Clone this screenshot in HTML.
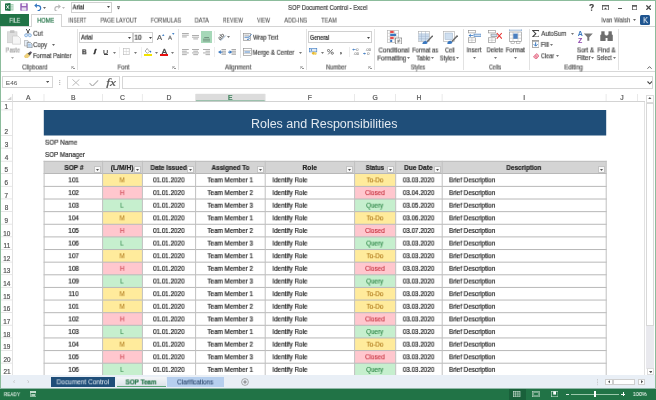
<!DOCTYPE html>
<html><head><meta charset="utf-8"><style>
*{margin:0;padding:0;box-sizing:border-box}
html,body{width:656px;height:400px;overflow:hidden;background:#fff;font-family:'Liberation Sans',sans-serif}
body{position:relative}
.a{position:absolute;white-space:nowrap}
.t{transform-origin:0 0;will-change:transform;-webkit-text-stroke:0.2px currentColor}
</style></head><body>
<div class="a" style="left:0px;top:0px;width:656px;height:1px;background:#8cbc9c"></div>
<div class="a" style="left:0px;top:0px;width:1px;height:400px;background:#8cbc9c"></div>
<div class="a" style="left:655px;top:0px;width:1px;height:400px;background:#8cbc9c"></div>
<svg class="a" style="left:5px;top:3px;" width="9" height="8" viewBox="0 0 9 8"><rect x="3.5" y="1" width="5" height="6.5" fill="#a8d0b4"/><path d="M5 2.6 H8.3 M5 4.2 H8.3 M5 5.8 H8.3" stroke="#e8f4ec" stroke-width="0.6"/><path d="M0 0.6 L5.5 0 L5.5 8 L0 7.4Z" fill="#1e7145"/><path d="M1.4 2.2 L4 5.8 M4 2.2 L1.4 5.8" stroke="#fff" stroke-width="0.9"/></svg>
<svg class="a" style="left:20px;top:3px;" width="8" height="8" viewBox="0 0 8 8"><rect x="0.3" y="0.3" width="7.4" height="7.4" fill="#9058b4" rx="0.6"/><rect x="1.8" y="0.3" width="4.4" height="2.8" fill="#f4eef8"/><rect x="1.6" y="4.4" width="4.8" height="3.3" fill="#e6dcef"/></svg>
<svg class="a" style="left:33.5px;top:3px;" width="8.5" height="8" viewBox="0 0 8.5 8"><path d="M2.4 2.6 H4.8 A2.6 2.6 0 0 1 4.8 7.6 H3.6" fill="none" stroke="#3476c0" stroke-width="1.25"/><path d="M0.2 2.6 L2.9 0.2 L2.9 5 Z" fill="#3476c0"/></svg>
<svg class="a" style="left:43.2px;top:6.5px;" width="3" height="2.0" viewBox="0 0 3 2.0"><path d="M0 0 L3 0 L1.5 2.0Z" fill="#666"/></svg>
<svg class="a" style="left:52.5px;top:3.5px;" width="8" height="7.5" viewBox="0 0 8 7.5"><path d="M5.8 2.6 H3.4 A2.5 2.5 0 0 0 3.4 7.2 H4.2" fill="none" stroke="#b8b8b8" stroke-width="1.2"/><path d="M7.9 2.6 L5.3 0.2 L5.3 5 Z" fill="#b8b8b8"/></svg>
<svg class="a" style="left:61.7px;top:6.5px;" width="3" height="2.0" viewBox="0 0 3 2.0"><path d="M0 0 L3 0 L1.5 2.0Z" fill="#bbb"/></svg>
<div class="a" style="left:71px;top:2px;width:41px;height:10.5px;border:1px solid #d0d0d0;background:#fff"></div>
<div class="a t" style="left:72px;top:4px;font-size:6.6px;line-height:6.6px;color:#222;font-weight:normal;font-style:normal;font-family:'Liberation Sans',sans-serif;transform:matrix(0.8747,0,0,1,0.600,0.400);">Arial</div>
<svg class="a" style="left:106.9px;top:6.2px;" width="3.0" height="2.0" viewBox="0 0 3.0 2.0"><path d="M0 0 L3.0 0 L1.5 2.0Z" fill="#444"/></svg>
<svg class="a" style="left:117px;top:5.5px;" width="3" height="4" viewBox="0 0 3 4"><rect x="0" y="0" width="3" height="0.7" fill="#555"/><path d="M0 1.6 L3 1.6 L1.5 3.4Z" fill="#555"/></svg>
<div class="a t" style="left:288px;top:5px;font-size:6.6px;line-height:6.6px;color:#444;font-weight:normal;font-style:normal;font-family:'Liberation Sans',sans-serif;transform:matrix(0.8725,0,0,1,0.112,0.000);">SOP Document Control - Excel</div>
<svg class="a" style="left:589px;top:4px;" width="5" height="7" viewBox="0 0 5 7"><path d="M0.8 1.8 C1 0.2 4.2 0.2 4.2 1.8 C4.2 3 2.5 3.1 2.5 4.5" fill="none" stroke="#444" stroke-width="1.3"/><rect x="1.9" y="5.5" width="1.3" height="1.3" fill="#444"/></svg>
<svg class="a" style="left:602.3px;top:4.8px;" width="7" height="5.5" viewBox="0 0 7 5.5"><rect x="0.4" y="0.4" width="6.2" height="4.7" fill="none" stroke="#555" stroke-width="0.8"/><rect x="0.4" y="0.4" width="6.2" height="1" fill="#555"/><path d="M2 4.2 L3.5 2.4 L5 4.2Z" fill="#444"/></svg>
<div class="a" style="left:617.7px;top:7.5px;width:4.6px;height:1.2px;background:#555"></div>
<svg class="a" style="left:631.8px;top:4.8px;" width="5.2" height="5.2" viewBox="0 0 5.2 5.2"><rect x="0.4" y="0.4" width="4.4" height="4.4" fill="none" stroke="#555" stroke-width="0.8"/><rect x="0.4" y="0.4" width="4.4" height="1.3" fill="#555"/></svg>
<svg class="a" style="left:645.6px;top:4.8px;" width="5.2" height="5.2" viewBox="0 0 5.2 5.2"><path d="M0.4 0.4 L4.8 4.8 M4.8 0.4 L0.4 4.8" stroke="#444" stroke-width="1.25"/></svg>
<div class="a" style="left:0px;top:14px;width:29px;height:12px;background:#217346"></div>
<div class="a t" style="left:9px;top:17px;font-size:6.4px;line-height:6.4px;color:#fff;font-weight:normal;font-style:normal;font-family:'Liberation Sans',sans-serif;transform:matrix(0.7852,0,0,1,0.498,0.800);-webkit-text-stroke:0.05px;">FILE</div>
<div class="a" style="left:31px;top:14px;width:31px;height:13px;border:1px solid #d4d4d4;border-bottom:none;background:#fff"></div>
<div class="a" style="left:1px;top:26px;width:30px;height:1px;background:#d4d4d4"></div>
<div class="a" style="left:61px;top:26px;width:594px;height:1px;background:#d4d4d4"></div>
<div class="a t" style="left:37px;top:17px;font-size:6.4px;line-height:6.4px;color:#217346;font-weight:normal;font-style:normal;font-family:'Liberation Sans',sans-serif;transform:matrix(0.8843,0,0,1,0.247,0.700);-webkit-text-stroke:0.2px;">HOME</div>
<div class="a t" style="left:68px;top:17px;font-size:6.4px;line-height:6.4px;color:#444;font-weight:normal;font-style:normal;font-family:'Liberation Sans',sans-serif;transform:matrix(0.7680,0,0,1,0.358,0.600);-webkit-text-stroke:0.05px;">INSERT</div>
<div class="a t" style="left:100px;top:17px;font-size:6.4px;line-height:6.4px;color:#444;font-weight:normal;font-style:normal;font-family:'Liberation Sans',sans-serif;transform:matrix(0.8237,0,0,1,0.478,0.600);-webkit-text-stroke:0.05px;">PAGE LAYOUT</div>
<div class="a t" style="left:150px;top:17px;font-size:6.4px;line-height:6.4px;color:#444;font-weight:normal;font-style:normal;font-family:'Liberation Sans',sans-serif;transform:matrix(0.8546,0,0,1,0.762,0.600);-webkit-text-stroke:0.05px;">FORMULAS</div>
<div class="a t" style="left:194px;top:17px;font-size:6.4px;line-height:6.4px;color:#444;font-weight:normal;font-style:normal;font-family:'Liberation Sans',sans-serif;transform:matrix(0.8873,0,0,1,0.646,0.600);-webkit-text-stroke:0.05px;">DATA</div>
<div class="a t" style="left:222px;top:17px;font-size:6.4px;line-height:6.4px;color:#444;font-weight:normal;font-style:normal;font-family:'Liberation Sans',sans-serif;transform:matrix(0.7893,0,0,1,0.896,0.600);-webkit-text-stroke:0.05px;">REVIEW</div>
<div class="a t" style="left:257px;top:17px;font-size:6.4px;line-height:6.4px;color:#444;font-weight:normal;font-style:normal;font-family:'Liberation Sans',sans-serif;transform:matrix(0.7874,0,0,1,0.050,0.600);-webkit-text-stroke:0.05px;">VIEW</div>
<div class="a t" style="left:284px;top:17px;font-size:6.4px;line-height:6.4px;color:#444;font-weight:normal;font-style:normal;font-family:'Liberation Sans',sans-serif;transform:matrix(0.8659,0,0,1,0.300,0.600);-webkit-text-stroke:0.05px;">ADD-INS</div>
<div class="a t" style="left:321px;top:17px;font-size:6.4px;line-height:6.4px;color:#444;font-weight:normal;font-style:normal;font-family:'Liberation Sans',sans-serif;transform:matrix(0.8837,0,0,1,0.087,0.600);-webkit-text-stroke:0.05px;">TEAM</div>
<div class="a t" style="left:601px;top:17px;font-size:6.6px;line-height:6.6px;color:#444;font-weight:normal;font-style:normal;font-family:'Liberation Sans',sans-serif;transform:matrix(0.8900,0,0,1,0.371,0.400);-webkit-text-stroke:0.1px;">Ivan Walsh</div>
<svg class="a" style="left:633.2px;top:19.2px;" width="3.0" height="2.0" viewBox="0 0 3.0 2.0"><path d="M0 0 L3.0 0 L1.5 2.0Z" fill="#666"/></svg>
<div class="a" style="left:639.7px;top:15px;width:10.3px;height:10.1px;background:#1f5590;border-radius:1.5px"></div>
<div class="a t" style="left:642px;top:15px;font-size:9.6px;line-height:9.6px;color:#f4f8fc;font-weight:normal;font-style:normal;font-family:'Liberation Sans',sans-serif;transform:matrix(0.7858,0,0,1,0.996,0.100);-webkit-text-stroke:0;">K</div>
<div class="a" style="left:1px;top:70.5px;width:654px;height:1px;background:#d8d8d8"></div>
<svg class="a" style="left:6.5px;top:30px;" width="14" height="14.5" viewBox="0 0 14 14.5"><rect x="0.5" y="1.8" width="9.5" height="11" fill="#dedede" stroke="#c8c8c8" stroke-width="0.6"/><rect x="3" y="0.3" width="4.5" height="2.8" rx="0.6" fill="#c2c2c2"/><path d="M5.5 6 H11 L13.5 8.5 V14.2 H5.5Z" fill="#f6f6f6" stroke="#c4c4c4" stroke-width="0.6"/></svg>
<div class="a t" style="left:5px;top:47px;font-size:6.6px;line-height:6.6px;color:#9a9a9a;font-weight:normal;font-style:normal;font-family:'Liberation Sans',sans-serif;transform:matrix(0.8542,0,0,1,0.649,0.500);">Paste</div>
<svg class="a" style="left:11.2px;top:56.8px;" width="3.0" height="2.0" viewBox="0 0 3.0 2.0"><path d="M0 0 L3.0 0 L1.5 2.0Z" fill="#aaa"/></svg>
<svg class="a" style="left:24.4px;top:29px;" width="8" height="8.5" viewBox="0 0 8 8.5"><path d="M2.2 0 L5 4.6 M5.8 0 L3 4.6" stroke="#4a4a4a" stroke-width="1"/><circle cx="2.1" cy="6.3" r="1.5" fill="#dce9f6" stroke="#7aa8dc" stroke-width="0.8"/><circle cx="5.9" cy="6.3" r="1.5" fill="#dce9f6" stroke="#7aa8dc" stroke-width="0.8"/></svg>
<div class="a t" style="left:33px;top:30px;font-size:6.6px;line-height:6.6px;color:#444;font-weight:normal;font-style:normal;font-family:'Liberation Sans',sans-serif;transform:matrix(0.9293,0,0,1,0.193,0.800);">Cut</div>
<svg class="a" style="left:24px;top:40px;" width="8.5" height="8.2" viewBox="0 0 8.5 8.2"><path d="M0.4 0.4 H3.6 L4.4 1.2 V6 H0.4Z" fill="#e6eef8" stroke="#9a9a9a" stroke-width="0.6"/><path d="M3.2 2.4 H6.4 L8.1 4.1 V7.9 H3.2Z" fill="#d6e6f6" stroke="#707070" stroke-width="0.6"/><path d="M4.2 4.6 H6.6 M4.2 6 H6.6" stroke="#6a9ad0" stroke-width="0.5"/></svg>
<div class="a t" style="left:33px;top:42px;font-size:6.6px;line-height:6.6px;color:#444;font-weight:normal;font-style:normal;font-family:'Liberation Sans',sans-serif;transform:matrix(0.8971,0,0,1,0.204,0.100);">Copy</div>
<svg class="a" style="left:52.1px;top:43.5px;" width="3.0" height="2.0" viewBox="0 0 3.0 2.0"><path d="M0 0 L3.0 0 L1.5 2.0Z" fill="#666"/></svg>
<svg class="a" style="left:24.2px;top:50.8px;" width="8.2" height="7.6" viewBox="0 0 8.2 7.6"><path d="M0.2 5.2 L3.4 2 L6 4.6 L2.8 7.6 C1.8 7.4 0.6 6.4 0.2 5.2Z" fill="#f0d27a" stroke="#d8b450" stroke-width="0.4"/><path d="M3.6 2.4 L6.8 0.2 L8 1.4 L5.8 4.6Z" fill="#505050"/><path d="M6.2 0.6 L7.6 2" stroke="#a070c0" stroke-width="0.5"/></svg>
<div class="a t" style="left:33px;top:53px;font-size:6.6px;line-height:6.6px;color:#444;font-weight:normal;font-style:normal;font-family:'Liberation Sans',sans-serif;transform:matrix(0.8784,0,0,1,0.036,0.100);">Format Painter</div>
<div class="a t" style="left:22px;top:64px;font-size:6.4px;line-height:6.4px;color:#555;font-weight:normal;font-style:normal;font-family:'Liberation Sans',sans-serif;transform:matrix(0.9315,0,0,1,0.102,0.500);">Clipboard</div>
<svg class="a" style="left:71px;top:65.6px;" width="4" height="3.5" viewBox="0 0 4 3.5"><path d="M0.4 3 V0.4 H3" fill="none" stroke="#999" stroke-width="0.6"/><path d="M1.3 1.3 L3.6 3.3" stroke="#666" stroke-width="0.8"/><path d="M2.2 3.4 H3.8 V1.8Z" fill="#666"/></svg>
<div class="a" style="left:77px;top:29px;width:1px;height:41px;background:#e2e2e2"></div>
<div class="a" style="left:79.2px;top:31.5px;width:54.2px;height:11.1px;border:1px solid #d0d0d0;background:#fff"></div>
<div class="a t" style="left:81px;top:34px;font-size:6.6px;line-height:6.6px;color:#222;font-weight:normal;font-style:normal;font-family:'Liberation Sans',sans-serif;transform:matrix(0.8825,0,0,1,0.000,0.600);">Arial</div>
<svg class="a" style="left:127.89999999999999px;top:36.6px;" width="3.0" height="2.0" viewBox="0 0 3.0 2.0"><path d="M0 0 L3.0 0 L1.5 2.0Z" fill="#444"/></svg>
<div class="a" style="left:133px;top:31.5px;width:20.2px;height:11.1px;border:1px solid #d0d0d0;background:#fff"></div>
<div class="a t" style="left:134px;top:34px;font-size:6.6px;line-height:6.6px;color:#222;font-weight:normal;font-style:normal;font-family:'Liberation Sans',sans-serif;transform:matrix(0.9545,0,0,1,0.496,0.700);">10</div>
<svg class="a" style="left:148.89999999999998px;top:36.6px;" width="3.0" height="2.0" viewBox="0 0 3.0 2.0"><path d="M0 0 L3.0 0 L1.5 2.0Z" fill="#444"/></svg>
<div class="a t" style="left:157px;top:33px;font-size:7.2px;line-height:7.2px;color:#555;font-weight:normal;font-style:normal;font-family:'Liberation Sans',sans-serif;transform:matrix(1.0522,0,0,1,0.000,0.800);">A</div>
<svg class="a" style="left:162px;top:33.5px;" width="2.5" height="2" viewBox="0 0 2.5 2"><path d="M0 2 L1.25 0 L2.5 2Z" fill="#4a86c8"/></svg>
<div class="a t" style="left:168px;top:34px;font-size:6px;line-height:6px;color:#555;font-weight:normal;font-style:normal;font-family:'Liberation Sans',sans-serif;transform:matrix(0.9596,0,0,1,0.100,0.700);">A</div>
<svg class="a" style="left:172px;top:33px;" width="2.5" height="2" viewBox="0 0 2.5 2"><path d="M0 0 L1.25 2 L2.5 0Z" fill="#4a86c8"/></svg>
<div class="a t" style="left:81px;top:49px;font-size:6.6px;line-height:6.6px;color:#333;font-weight:bold;font-style:normal;font-family:'Liberation Sans',sans-serif;transform:matrix(0.9439,0,0,1,0.964,0.300);">B</div>
<div class="a t" style="left:93px;top:49px;font-size:6.6px;line-height:6.6px;color:#333;font-weight:normal;font-style:italic;font-family:'Liberation Sans',sans-serif;transform:matrix(1.7787,0,0,1,0.130,0.300);-webkit-text-stroke:0.35px;">I</div>
<div class="a t" style="left:103px;top:48px;font-size:6.2px;line-height:6.2px;color:#444;font-weight:normal;font-style:normal;font-family:'Liberation Sans',sans-serif;transform:matrix(1.1602,0,0,1,0.025,0.600);">U</div>
<div class="a" style="left:103.6px;top:54.2px;width:4.1px;height:0.7px;background:#444"></div>
<svg class="a" style="left:112.9px;top:51.6px;" width="3.0" height="2.0" viewBox="0 0 3.0 2.0"><path d="M0 0 L3.0 0 L1.5 2.0Z" fill="#777"/></svg>
<div class="a" style="left:119.2px;top:46.5px;width:1px;height:11px;background:#efefef"></div>
<svg class="a" style="left:123.3px;top:48.1px;" width="6.5" height="7" viewBox="0 0 6.5 7"><rect x="0.3" y="0.3" width="5.9" height="6.4" fill="none" stroke="#b8b8b8" stroke-width="0.6"/><path d="M3.25 0.3 V6.7 M0.3 3.5 H6.2" stroke="#c8c8c8" stroke-width="0.5"/></svg>
<svg class="a" style="left:133.7px;top:51.6px;" width="3.0" height="2.0" viewBox="0 0 3.0 2.0"><path d="M0 0 L3.0 0 L1.5 2.0Z" fill="#777"/></svg>
<div class="a" style="left:140.5px;top:46.5px;width:1px;height:11px;background:#efefef"></div>
<svg class="a" style="left:144.3px;top:47.8px;" width="8" height="6" viewBox="0 0 8 6"><path d="M1 3 L3.2 0.8 L5.6 3.2 L3.4 5.4Z" fill="#fff" stroke="#777" stroke-width="0.6"/><path d="M3.2 0.8 L2.6 0.2" stroke="#777" stroke-width="0.6"/><path d="M5.6 3.2 C7 2.2 7.8 3.4 6.8 5" fill="#3a78c0"/></svg>
<div class="a" style="left:144px;top:54px;width:8.2px;height:1.8px;background:#f2e200"></div>
<svg class="a" style="left:154.6px;top:51.6px;" width="3.0" height="2.0" viewBox="0 0 3.0 2.0"><path d="M0 0 L3.0 0 L1.5 2.0Z" fill="#777"/></svg>
<div class="a t" style="left:161px;top:48px;font-size:6.6px;line-height:6.6px;color:#444;font-weight:normal;font-style:normal;font-family:'Liberation Sans',sans-serif;transform:matrix(1.1938,0,0,1,0.700,0.500);-webkit-text-stroke:0.35px;">A</div>
<div class="a" style="left:160.3px;top:54px;width:8px;height:2px;background:#e81010"></div>
<svg class="a" style="left:171.0px;top:51.6px;" width="3.0" height="2.0" viewBox="0 0 3.0 2.0"><path d="M0 0 L3.0 0 L1.5 2.0Z" fill="#777"/></svg>
<div class="a t" style="left:117px;top:64px;font-size:6.4px;line-height:6.4px;color:#555;font-weight:normal;font-style:normal;font-family:'Liberation Sans',sans-serif;transform:matrix(0.9244,0,0,1,0.527,0.500);">Font</div>
<svg class="a" style="left:172px;top:65.6px;" width="4" height="3.5" viewBox="0 0 4 3.5"><path d="M0.4 3 V0.4 H3" fill="none" stroke="#999" stroke-width="0.6"/><path d="M1.3 1.3 L3.6 3.3" stroke="#666" stroke-width="0.8"/><path d="M2.2 3.4 H3.8 V1.8Z" fill="#666"/></svg>
<div class="a" style="left:177.5px;top:29px;width:1px;height:41px;background:#e2e2e2"></div>
<svg class="a" style="left:181.9px;top:32.7px;" width="6.8" height="5.4" viewBox="0 0 6.8 5.4"><rect x="0" y="0.0" width="6.8" height="0.7" fill="#8a8a8a"/><rect x="0" y="1.8" width="6.8" height="0.7" fill="#8a8a8a"/><rect x="0" y="3.6" width="4.8" height="0.7" fill="#8a8a8a"/></svg>
<svg class="a" style="left:192.1px;top:34.6px;" width="7.3" height="5.4" viewBox="0 0 7.3 5.4"><rect x="0.0" y="0.0" width="7.3" height="0.7" fill="#8a8a8a"/><rect x="0.0" y="1.8" width="7.3" height="0.7" fill="#8a8a8a"/><rect x="1.25" y="3.6" width="4.8" height="0.7" fill="#8a8a8a"/></svg>
<div class="a" style="left:201.2px;top:31.4px;width:10.9px;height:11.7px;background:#a6d8b8"></div>
<svg class="a" style="left:203px;top:37.2px;" width="7.3" height="5.4" viewBox="0 0 7.3 5.4"><rect x="1.25" y="0.0" width="4.8" height="0.7" fill="#5e7a6a"/><rect x="0.0" y="1.8" width="7.3" height="0.7" fill="#5e7a6a"/><rect x="0.0" y="3.6" width="7.3" height="0.7" fill="#5e7a6a"/></svg>
<svg class="a" style="left:217px;top:32px;" width="10" height="9.5" viewBox="0 0 10 9.5"><g transform="rotate(-45 4.5 4.5)"><text x="0.6" y="6.2" font-size="6" font-weight="bold" fill="#666" font-family="Liberation Sans">ab</text></g><path d="M3.5 8.8 L8.8 3.5" stroke="#7a9ab8" stroke-width="0.8"/></svg>
<svg class="a" style="left:227.39999999999998px;top:35.7px;" width="3.0" height="2.0" viewBox="0 0 3.0 2.0"><path d="M0 0 L3.0 0 L1.5 2.0Z" fill="#777"/></svg>
<div class="a" style="left:214px;top:31px;width:1px;height:12px;background:#ececec"></div>
<svg class="a" style="left:181.9px;top:48.5px;" width="6.8" height="7.2" viewBox="0 0 6.8 7.2"><rect x="0" y="0.0" width="6.8" height="0.7" fill="#8a8a8a"/><rect x="0" y="1.8" width="4.8" height="0.7" fill="#8a8a8a"/><rect x="0" y="3.6" width="6.8" height="0.7" fill="#8a8a8a"/><rect x="0" y="5.4" width="4.8" height="0.7" fill="#8a8a8a"/></svg>
<svg class="a" style="left:192.1px;top:48.5px;" width="7.3" height="7.2" viewBox="0 0 7.3 7.2"><rect x="0.0" y="0.0" width="7.3" height="0.7" fill="#8a8a8a"/><rect x="1.25" y="1.8" width="4.8" height="0.7" fill="#8a8a8a"/><rect x="0.0" y="3.6" width="7.3" height="0.7" fill="#8a8a8a"/><rect x="1.25" y="5.4" width="4.8" height="0.7" fill="#8a8a8a"/></svg>
<svg class="a" style="left:202.8px;top:48.5px;" width="7.3" height="7.2" viewBox="0 0 7.3 7.2"><rect x="0.0" y="0.0" width="7.3" height="0.7" fill="#8a8a8a"/><rect x="2.5" y="1.8" width="4.8" height="0.7" fill="#8a8a8a"/><rect x="0.0" y="3.6" width="7.3" height="0.7" fill="#8a8a8a"/><rect x="2.5" y="5.4" width="4.8" height="0.7" fill="#8a8a8a"/></svg>
<div class="a" style="left:214px;top:47px;width:1px;height:10px;background:#ececec"></div>
<svg class="a" style="left:217.5px;top:48.5px;" width="8.3" height="6.5" viewBox="0 0 8.3 6.5"><path d="M3.5 0.4 H8.3 M3.5 2.2 H8.3 M3.5 4 H8.3 M3.5 5.8 H8.3" stroke="#777" stroke-width="0.7"/><path d="M0 3.1 L2.8 1.3 V4.9Z" fill="#3a78c0"/><rect x="2" y="2.7" width="2.5" height="0.9" fill="#3a78c0"/></svg>
<svg class="a" style="left:228.2px;top:48.5px;" width="8.3" height="6.5" viewBox="0 0 8.3 6.5"><path d="M3.5 0.4 H8.3 M3.5 2.2 H8.3 M3.5 4 H8.3 M3.5 5.8 H8.3" stroke="#777" stroke-width="0.7"/><path d="M4.3 3.1 L1.5 1.3 V4.9Z" fill="#3a78c0"/><rect x="0" y="2.7" width="2.5" height="0.9" fill="#3a78c0"/></svg>
<div class="a" style="left:240.3px;top:30px;width:1px;height:28px;background:#e2e2e2"></div>
<svg class="a" style="left:243.3px;top:32.8px;" width="8.7" height="8" viewBox="0 0 8.7 8"><rect x="0.3" y="0.3" width="7.4" height="7.4" fill="#f4f4f4" stroke="#888" stroke-width="0.6"/><path d="M1.5 2.2 H6" stroke="#888" stroke-width="0.6"/><path d="M1.5 4.2 H5.5 A1.2 1.2 0 0 1 5.5 6.4 H4" fill="none" stroke="#3a78c0" stroke-width="0.9"/><path d="M5.8 4 L8.6 1.2" stroke="#3a78c0" stroke-width="0.9"/></svg>
<div class="a t" style="left:253px;top:34px;font-size:6.6px;line-height:6.6px;color:#444;font-weight:normal;font-style:normal;font-family:'Liberation Sans',sans-serif;transform:matrix(0.8527,0,0,1,0.100,0.700);">Wrap Text</div>
<svg class="a" style="left:243.3px;top:47.7px;" width="8.7" height="8" viewBox="0 0 8.7 8"><rect x="0.3" y="0.3" width="8" height="7.4" fill="#fff" stroke="#888" stroke-width="0.6"/><path d="M0.3 2.6 H8.3 M0.3 5.4 H8.3" stroke="#999" stroke-width="0.5"/><path d="M1.5 4 H7" stroke="#3a78c0" stroke-width="0.9"/></svg>
<div class="a t" style="left:252px;top:49px;font-size:6.6px;line-height:6.6px;color:#444;font-weight:normal;font-style:normal;font-family:'Liberation Sans',sans-serif;transform:matrix(0.8934,0,0,1,0.628,0.800);">Merge &amp; Center</div>
<svg class="a" style="left:299.0px;top:51.6px;" width="3.0" height="2.0" viewBox="0 0 3.0 2.0"><path d="M0 0 L3.0 0 L1.5 2.0Z" fill="#777"/></svg>
<div class="a t" style="left:224px;top:64px;font-size:6.4px;line-height:6.4px;color:#555;font-weight:normal;font-style:normal;font-family:'Liberation Sans',sans-serif;transform:matrix(0.9255,0,0,1,0.900,0.500);">Alignment</div>
<svg class="a" style="left:300px;top:65.6px;" width="4" height="3.5" viewBox="0 0 4 3.5"><path d="M0.4 3 V0.4 H3" fill="none" stroke="#999" stroke-width="0.6"/><path d="M1.3 1.3 L3.6 3.3" stroke="#666" stroke-width="0.8"/><path d="M2.2 3.4 H3.8 V1.8Z" fill="#666"/></svg>
<div class="a" style="left:306px;top:29px;width:1px;height:41px;background:#e2e2e2"></div>
<div class="a" style="left:308.3px;top:31.4px;width:63.7px;height:11.3px;border:1px solid #d0d0d0;background:#fff"></div>
<div class="a t" style="left:309px;top:34px;font-size:6.6px;line-height:6.6px;color:#222;font-weight:normal;font-style:normal;font-family:'Liberation Sans',sans-serif;transform:matrix(0.8169,0,0,1,0.930,0.900);">General</div>
<svg class="a" style="left:366.9px;top:36.6px;" width="3.0" height="2.0" viewBox="0 0 3.0 2.0"><path d="M0 0 L3.0 0 L1.5 2.0Z" fill="#444"/></svg>
<svg class="a" style="left:309.4px;top:48.1px;" width="8.7" height="7" viewBox="0 0 8.7 7"><rect x="0.3" y="0.3" width="7.5" height="3.6" fill="#dfeaf6" stroke="#3a78c0" stroke-width="0.6"/><path d="M1.5 2.1 L3 1.1 V3.1Z" fill="#3a78c0"/><circle cx="4.5" cy="5.3" r="1.5" fill="#e8b830"/><circle cx="6.4" cy="5.6" r="1.3" fill="#f0d060"/></svg>
<svg class="a" style="left:320.5px;top:51.6px;" width="3.0" height="2.0" viewBox="0 0 3.0 2.0"><path d="M0 0 L3.0 0 L1.5 2.0Z" fill="#777"/></svg>
<svg class="a" style="left:327.1px;top:49.4px;" width="6.8" height="5.7" viewBox="0 0 6.8 5.7"><circle cx="1.5" cy="1.5" r="1.1" fill="none" stroke="#555" stroke-width="0.8"/><circle cx="5.3" cy="4.2" r="1.1" fill="none" stroke="#555" stroke-width="0.8"/><path d="M5.6 0.3 L1.2 5.4" stroke="#555" stroke-width="0.8"/></svg>
<svg class="a" style="left:339.6px;top:51.5px;" width="2" height="3" viewBox="0 0 2 3"><circle cx="0.9" cy="0.9" r="0.85" fill="#555"/><path d="M1.6 1 L0.6 2.8" stroke="#555" stroke-width="0.6"/></svg>
<div class="a" style="left:348.6px;top:47px;width:1px;height:10px;background:#ececec"></div>
<svg class="a" style="left:352px;top:48.3px;" width="7.5" height="7" viewBox="0 0 7.5 7"><path d="M0.2 1.6 L1.8 0.4 V2.8Z" fill="#3a78c0"/><rect x="1.5" y="1.3" width="2.2" height="0.7" fill="#3a78c0"/><text x="4.3" y="3.2" font-size="4" fill="#555" font-family="Liberation Sans">0</text><text x="1.5" y="6.9" font-size="4" fill="#555" font-family="Liberation Sans">.00</text></svg>
<svg class="a" style="left:362.7px;top:48.3px;" width="8" height="7" viewBox="0 0 8 7"><text x="2.5" y="3.2" font-size="4" fill="#555" font-family="Liberation Sans">.00</text><path d="M3 5.6 L1.4 4.4 V6.8Z" fill="#3a78c0"/><rect x="0" y="5.3" width="2" height="0.7" fill="#3a78c0"/><text x="4.3" y="6.9" font-size="4" fill="#555" font-family="Liberation Sans">0</text></svg>
<div class="a t" style="left:326px;top:64px;font-size:6.4px;line-height:6.4px;color:#555;font-weight:normal;font-style:normal;font-family:'Liberation Sans',sans-serif;transform:matrix(0.8941,0,0,1,0.042,0.500);">Number</div>
<svg class="a" style="left:368.3px;top:65.6px;" width="4" height="3.5" viewBox="0 0 4 3.5"><path d="M0.4 3 V0.4 H3" fill="none" stroke="#999" stroke-width="0.6"/><path d="M1.3 1.3 L3.6 3.3" stroke="#666" stroke-width="0.8"/><path d="M2.2 3.4 H3.8 V1.8Z" fill="#666"/></svg>
<div class="a" style="left:374.4px;top:29px;width:1px;height:41px;background:#e2e2e2"></div>
<svg class="a" style="left:387px;top:30.1px;" width="15.1" height="14.4" viewBox="0 0 15.1 14.4"><rect x="0.3" y="0.3" width="11" height="12" fill="#fff" stroke="#aaa" stroke-width="0.6"/><path d="M0.3 3.3 H11.3 M0.3 6.3 H11.3 M0.3 9.3 H11.3 M3 0.3 V12.3 M7.5 0.3 V12.3" stroke="#bbb" stroke-width="0.5"/><rect x="3.2" y="0.8" width="3.5" height="2.2" fill="#e84a4a"/><rect x="3.2" y="3.8" width="6" height="2.2" fill="#3a78c0"/><rect x="3.2" y="6.8" width="3.5" height="2.2" fill="#e84a4a"/><rect x="3.2" y="9.8" width="2" height="2.2" fill="#3a78c0"/><rect x="8.6" y="8" width="6.2" height="6.1" fill="#fff" stroke="#666" stroke-width="0.6"/><path d="M10 10.3 H13.4 M10 11.8 H13.4 M12.5 9.3 L11 12.8" stroke="#555" stroke-width="0.5"/></svg>
<div class="a t" style="left:378px;top:47px;font-size:6.6px;line-height:6.6px;color:#444;font-weight:normal;font-style:normal;font-family:'Liberation Sans',sans-serif;transform:matrix(0.9357,0,0,1,0.491,0.500);">Conditional</div>
<div class="a t" style="left:377px;top:55px;font-size:6.6px;line-height:6.6px;color:#444;font-weight:normal;font-style:normal;font-family:'Liberation Sans',sans-serif;transform:matrix(0.9163,0,0,1,0.316,0.500);">Formatting</div>
<svg class="a" style="left:407.3px;top:57.3px;" width="3.0" height="2.0" viewBox="0 0 3.0 2.0"><path d="M0 0 L3.0 0 L1.5 2.0Z" fill="#777"/></svg>
<svg class="a" style="left:417.6px;top:31.2px;" width="15.4" height="13.3" viewBox="0 0 15.4 13.3"><rect x="0.3" y="0.3" width="11" height="10" fill="#fff" stroke="#aaa" stroke-width="0.6"/><rect x="0.6" y="2.8" width="10.4" height="7.2" fill="#cfdff0"/><path d="M0.3 2.8 H11.3 M0.3 5.3 H11.3 M0.3 7.8 H11.3 M3.5 0.3 V10.3 M7.5 0.3 V10.3" stroke="#9bb0c8" stroke-width="0.5"/><path d="M8.6 10.2 L14.2 4.2 L15.3 5.3 L9.6 11.2Z" fill="#6a6a6a"/><path d="M4.3 13 C4.6 10.8 6.6 9.4 8.4 10.2 L9.6 11.4 C9.4 13.2 6.6 13.6 4.3 13Z" fill="#3a78c0"/></svg>
<div class="a t" style="left:412px;top:47px;font-size:6.6px;line-height:6.6px;color:#444;font-weight:normal;font-style:normal;font-family:'Liberation Sans',sans-serif;transform:matrix(0.8683,0,0,1,0.242,0.500);">Format as</div>
<div class="a t" style="left:416px;top:55px;font-size:6.6px;line-height:6.6px;color:#444;font-weight:normal;font-style:normal;font-family:'Liberation Sans',sans-serif;transform:matrix(0.8947,0,0,1,0.382,0.500);">Table</div>
<svg class="a" style="left:431.3px;top:57.3px;" width="3.0" height="2.0" viewBox="0 0 3.0 2.0"><path d="M0 0 L3.0 0 L1.5 2.0Z" fill="#777"/></svg>
<svg class="a" style="left:442.6px;top:30.8px;" width="15.1" height="13" viewBox="0 0 15.1 13"><rect x="0.3" y="0.3" width="11" height="10" fill="#fff" stroke="#aaa" stroke-width="0.6"/><rect x="2" y="2" width="7.6" height="6.5" fill="#cfdff0" stroke="#9bb0c8" stroke-width="0.5"/><path d="M8.4 10 L14 4 L15.1 5.1 L9.4 11Z" fill="#6a6a6a"/><path d="M4.1 12.8 C4.4 10.6 6.4 9.2 8.2 10 L9.4 11.2 C9.2 13 6.4 13.4 4.1 12.8Z" fill="#3a78c0"/></svg>
<div class="a t" style="left:445px;top:47px;font-size:6.6px;line-height:6.6px;color:#444;font-weight:normal;font-style:normal;font-family:'Liberation Sans',sans-serif;transform:matrix(0.8376,0,0,1,0.024,0.500);">Cell</div>
<div class="a t" style="left:439px;top:55px;font-size:6.6px;line-height:6.6px;color:#444;font-weight:normal;font-style:normal;font-family:'Liberation Sans',sans-serif;transform:matrix(0.8526,0,0,1,0.819,0.500);">Styles</div>
<svg class="a" style="left:456.0px;top:57.3px;" width="3.0" height="2.0" viewBox="0 0 3.0 2.0"><path d="M0 0 L3.0 0 L1.5 2.0Z" fill="#777"/></svg>
<div class="a t" style="left:410px;top:64px;font-size:6.4px;line-height:6.4px;color:#555;font-weight:normal;font-style:normal;font-family:'Liberation Sans',sans-serif;transform:matrix(0.8199,0,0,1,0.738,0.500);">Styles</div>
<div class="a" style="left:462.5px;top:29px;width:1px;height:41px;background:#e2e2e2"></div>
<svg class="a" style="left:467.6px;top:30.3px;" width="13.4" height="12.8" viewBox="0 0 13.4 12.8"><rect x="0.3" y="0.3" width="7.2" height="2.6" fill="#fff" stroke="#888" stroke-width="0.6"/><rect x="0.3" y="7.8" width="7.2" height="4.7" fill="#fff" stroke="#888" stroke-width="0.6"/><path d="M0.3 10.2 H7.5 M3.9 7.8 V12.5" stroke="#aaa" stroke-width="0.5"/><rect x="6" y="4.1" width="7.1" height="2.6" fill="#cfdff0" stroke="#3a78c0" stroke-width="0.6"/><path d="M0.5 5.4 L2.8 3.9 V6.9Z" fill="#3a78c0"/><rect x="2.5" y="5" width="2.8" height="0.8" fill="#3a78c0"/></svg>
<div class="a t" style="left:466px;top:47px;font-size:6.6px;line-height:6.6px;color:#444;font-weight:normal;font-style:normal;font-family:'Liberation Sans',sans-serif;transform:matrix(0.8965,0,0,1,0.667,0.300);">Insert</div>
<svg class="a" style="left:473.0px;top:57.2px;" width="3.0" height="2.0" viewBox="0 0 3.0 2.0"><path d="M0 0 L3.0 0 L1.5 2.0Z" fill="#777"/></svg>
<svg class="a" style="left:488px;top:30.3px;" width="14.3" height="12.8" viewBox="0 0 14.3 12.8"><rect x="0.3" y="0.3" width="7.2" height="2.6" fill="#fff" stroke="#888" stroke-width="0.6"/><rect x="0.3" y="7.8" width="7.2" height="4.7" fill="#fff" stroke="#888" stroke-width="0.6"/><path d="M0.3 10.2 H7.5 M3.9 7.8 V12.5" stroke="#aaa" stroke-width="0.5"/><rect x="3" y="4.1" width="6" height="2.6" fill="#cfdff0" stroke="#888" stroke-width="0.6"/><path d="M8.8 3 L13.8 8.6 M13.8 3 L8.8 8.6" stroke="#e83030" stroke-width="1.1"/></svg>
<div class="a t" style="left:486px;top:47px;font-size:6.6px;line-height:6.6px;color:#444;font-weight:normal;font-style:normal;font-family:'Liberation Sans',sans-serif;transform:matrix(0.8729,0,0,1,0.639,0.300);">Delete</div>
<svg class="a" style="left:494.0px;top:57.2px;" width="3.0" height="2.0" viewBox="0 0 3.0 2.0"><path d="M0 0 L3.0 0 L1.5 2.0Z" fill="#777"/></svg>
<svg class="a" style="left:507.8px;top:29.4px;" width="15.2" height="14.9" viewBox="0 0 15.2 14.9"><path d="M1.5 1.2 H13.5" stroke="#5a8ac0" stroke-width="0.6"/><path d="M1.5 0.3 V2.1 M13.5 0.3 V2.1" stroke="#5a8ac0" stroke-width="0.5"/><rect x="1.5" y="3" width="12" height="9.5" fill="#fff" stroke="#8a8a8a" stroke-width="0.6"/><path d="M1.5 6 H13.5 M1.5 9.2 H13.5 M5 3 V12.5 M10 3 V12.5" stroke="#b0b0b0" stroke-width="0.5"/><rect x="5.3" y="4.6" width="4.4" height="5.2" fill="#4a7fc0"/><rect x="3" y="12.5" width="3.5" height="2" fill="#fff" stroke="#8a8a8a" stroke-width="0.5"/><rect x="8.5" y="12.5" width="3.5" height="2" fill="#fff" stroke="#8a8a8a" stroke-width="0.5"/></svg>
<div class="a t" style="left:505px;top:47px;font-size:6.6px;line-height:6.6px;color:#444;font-weight:normal;font-style:normal;font-family:'Liberation Sans',sans-serif;transform:matrix(0.9199,0,0,1,0.714,0.300);">Format</div>
<svg class="a" style="left:514.4000000000001px;top:57.2px;" width="3.0" height="2.0" viewBox="0 0 3.0 2.0"><path d="M0 0 L3.0 0 L1.5 2.0Z" fill="#777"/></svg>
<div class="a t" style="left:488px;top:64px;font-size:6.4px;line-height:6.4px;color:#555;font-weight:normal;font-style:normal;font-family:'Liberation Sans',sans-serif;transform:matrix(0.8583,0,0,1,0.925,0.500);">Cells</div>
<div class="a" style="left:529px;top:29px;width:1px;height:41px;background:#e2e2e2"></div>
<svg class="a" style="left:531.9px;top:29.5px;" width="7.6" height="7.4" viewBox="0 0 7.6 7.4"><path d="M7.2 1.8 V0.4 H0.6 L3.8 3.7 L0.6 7 H7.2 V5.6" fill="none" stroke="#444" stroke-width="1.1"/></svg>
<div class="a t" style="left:541px;top:30px;font-size:6.6px;line-height:6.6px;color:#444;font-weight:normal;font-style:normal;font-family:'Liberation Sans',sans-serif;transform:matrix(0.9203,0,0,1,0.300,0.900);">AutoSum</div>
<svg class="a" style="left:570.5px;top:32.8px;" width="3.0" height="2.0" viewBox="0 0 3.0 2.0"><path d="M0 0 L3.0 0 L1.5 2.0Z" fill="#777"/></svg>
<svg class="a" style="left:532.2px;top:40px;" width="7.3" height="7.7" viewBox="0 0 7.3 7.7"><rect x="0.3" y="0.3" width="6.7" height="7.1" fill="#fff" stroke="#777" stroke-width="0.6"/><rect x="0.3" y="0.3" width="6.7" height="1.4" fill="#999"/><path d="M3.65 2.3 V6 M1.7 4.2 L3.65 6.2 L5.6 4.2" stroke="#3a78c0" stroke-width="1" fill="none"/></svg>
<div class="a t" style="left:540px;top:41px;font-size:6.6px;line-height:6.6px;color:#444;font-weight:normal;font-style:normal;font-family:'Liberation Sans',sans-serif;transform:matrix(0.9702,0,0,1,0.688,0.900);">Fill</div>
<svg class="a" style="left:550.3000000000001px;top:43.8px;" width="3.0" height="2.0" viewBox="0 0 3.0 2.0"><path d="M0 0 L3.0 0 L1.5 2.0Z" fill="#777"/></svg>
<svg class="a" style="left:532.5px;top:52.9px;" width="6.5" height="6.1" viewBox="0 0 6.5 6.1"><path d="M0.4 3.9 L3.6 0.5 L6.2 2.9 L3 6Z" fill="#f2a8b8" stroke="#d84868" stroke-width="0.6"/><path d="M1.8 2.4 L4.5 5" stroke="#d84868" stroke-width="0.5"/></svg>
<div class="a t" style="left:540px;top:53px;font-size:6.6px;line-height:6.6px;color:#444;font-weight:normal;font-style:normal;font-family:'Liberation Sans',sans-serif;transform:matrix(0.8324,0,0,1,0.925,0.300);">Clear</div>
<svg class="a" style="left:556.0px;top:55.2px;" width="3.0" height="2.0" viewBox="0 0 3.0 2.0"><path d="M0 0 L3.0 0 L1.5 2.0Z" fill="#777"/></svg>
<svg class="a" style="left:577.8px;top:30px;" width="15" height="12.8" viewBox="0 0 15 12.8"><text x="-0.2" y="5.6" font-size="7" fill="#3a78c0" font-family="Liberation Sans" font-weight="bold">A</text><text x="0.1" y="12.6" font-size="7" fill="#8e44ad" font-family="Liberation Sans" font-weight="bold">Z</text><path d="M5.8 3.6 H14.8 L11.3 7.3 V10.8 L9.3 10.8 V7.3Z" fill="#7a7a7a"/></svg>
<div class="a t" style="left:576px;top:47px;font-size:6.6px;line-height:6.6px;color:#444;font-weight:normal;font-style:normal;font-family:'Liberation Sans',sans-serif;transform:matrix(0.9225,0,0,1,0.996,0.400);">Sort &amp;</div>
<div class="a t" style="left:576px;top:55px;font-size:6.6px;line-height:6.6px;color:#444;font-weight:normal;font-style:normal;font-family:'Liberation Sans',sans-serif;transform:matrix(0.9319,0,0,1,0.808,0.100);">Filter</div>
<svg class="a" style="left:591.4000000000001px;top:57px;" width="3.0" height="2.0" viewBox="0 0 3.0 2.0"><path d="M0 0 L3.0 0 L1.5 2.0Z" fill="#777"/></svg>
<svg class="a" style="left:600.2px;top:30.9px;" width="13.1" height="10.5" viewBox="0 0 13.1 10.5"><rect x="0.3" y="3.5" width="5.3" height="7" rx="1" fill="#6e6e6e"/><rect x="7.5" y="3.5" width="5.3" height="7" rx="1" fill="#6e6e6e"/><rect x="1.3" y="0.3" width="3.3" height="4" fill="#6e6e6e"/><rect x="8.5" y="0.3" width="3.3" height="4" fill="#6e6e6e"/><rect x="5" y="4.5" width="3" height="2.5" fill="#6e6e6e"/></svg>
<div class="a t" style="left:597px;top:47px;font-size:6.6px;line-height:6.6px;color:#444;font-weight:normal;font-style:normal;font-family:'Liberation Sans',sans-serif;transform:matrix(0.9449,0,0,1,0.401,0.400);">Find &amp;</div>
<div class="a t" style="left:596px;top:55px;font-size:6.6px;line-height:6.6px;color:#444;font-weight:normal;font-style:normal;font-family:'Liberation Sans',sans-serif;transform:matrix(0.8133,0,0,1,0.732,0.100);">Select</div>
<svg class="a" style="left:612.7px;top:57px;" width="3.0" height="2.0" viewBox="0 0 3.0 2.0"><path d="M0 0 L3.0 0 L1.5 2.0Z" fill="#777"/></svg>
<div class="a t" style="left:564px;top:64px;font-size:6.4px;line-height:6.4px;color:#555;font-weight:normal;font-style:normal;font-family:'Liberation Sans',sans-serif;transform:matrix(0.9504,0,0,1,0.213,0.500);">Editing</div>
<div class="a" style="left:618px;top:29px;width:1px;height:41px;background:#e2e2e2"></div>
<svg class="a" style="left:646.5px;top:65.5px;" width="5" height="3.2" viewBox="0 0 5 3.2"><path d="M0.4 2.8 L2.5 0.6 L4.6 2.8" fill="none" stroke="#555" stroke-width="0.9"/></svg>
<div class="a" style="left:2.4px;top:76.1px;width:50.3px;height:12.3px;border:1px solid #d6d6d6;background:#fff"></div>
<div class="a t" style="left:5px;top:79px;font-size:6.2px;line-height:6.2px;color:#555;font-weight:normal;font-style:normal;font-family:'Liberation Sans',sans-serif;transform:matrix(1.0557,0,0,1,0.776,0.600);-webkit-text-stroke:0;">E46</div>
<svg class="a" style="left:45.7px;top:81.3px;" width="3.2" height="2.0" viewBox="0 0 3.2 2.0"><path d="M0 0 L3.2 0 L1.6 2.0Z" fill="#555"/></svg>
<svg class="a" style="left:59px;top:79.8px;" width="1.5" height="5.5" viewBox="0 0 1.5 5.5"><circle cx="0.75" cy="0.6" r="0.55" fill="#999"/><circle cx="0.75" cy="2.6" r="0.55" fill="#999"/><circle cx="0.75" cy="4.6" r="0.55" fill="#999"/></svg>
<div class="a" style="left:67.1px;top:76.1px;width:53.4px;height:12.6px;border:1px solid #d6d6d6;background:#fff"></div>
<svg class="a" style="left:72.1px;top:78.9px;" width="7.8" height="7.2" viewBox="0 0 7.8 7.2"><path d="M0.4 0.4 L7.4 6.8 M7.4 0.4 L0.4 6.8" stroke="#b4b4b4" stroke-width="0.9"/></svg>
<svg class="a" style="left:89.2px;top:79.7px;" width="9.6" height="6.7" viewBox="0 0 9.6 6.7"><path d="M0.5 3.2 L3.5 6.2 L9.2 0.4" fill="none" stroke="#b4b4b4" stroke-width="1.1"/></svg>
<div class="a t" style="left:106px;top:77px;font-size:9.6px;line-height:9.6px;color:#555;font-weight:normal;font-style:italic;font-family:'Liberation Serif',serif;transform:matrix(1.4085,0,0,1,0.165,0.700);">fx</div>
<div class="a" style="left:122.3px;top:76.1px;width:531px;height:12.6px;border:1px solid #d6d6d6;background:#fff"></div>
<svg class="a" style="left:646.5px;top:81.2px;" width="5.5" height="3.4" viewBox="0 0 5.5 3.4"><path d="M0.5 0.5 L2.75 2.8 L5 0.5" fill="none" stroke="#444" stroke-width="1.1"/></svg>
<svg class="a" style="left:0;top:0" width="656" height="400" viewBox="0 0 656 400"><rect x="195.6" y="93.8" width="69.6" height="7.5" fill="#dcdcdc"/><rect x="195.6" y="100.6" width="69.6" height="1" fill="#3c9a68"/><rect x="1" y="101" width="644" height="0.9" fill="#cfcfcf"/><rect x="43.6" y="94" width="0.8" height="7" fill="#e4e4e4"/><rect x="102.1" y="94" width="0.8" height="7" fill="#e4e4e4"/><rect x="141.9" y="94" width="0.8" height="7" fill="#e4e4e4"/><rect x="195.1" y="94" width="0.8" height="7" fill="#e4e4e4"/><rect x="264.7" y="94" width="0.8" height="7" fill="#e4e4e4"/><rect x="354.1" y="94" width="0.8" height="7" fill="#e4e4e4"/><rect x="395.2" y="94" width="0.8" height="7" fill="#e4e4e4"/><rect x="441.7" y="94" width="0.8" height="7" fill="#e4e4e4"/><rect x="605.7" y="94" width="0.8" height="7" fill="#e4e4e4"/><rect x="637.0" y="94" width="0.8" height="7" fill="#e4e4e4"/><rect x="12.2" y="94" width="0.8" height="281" fill="#dcdcdc"/><rect x="1" y="109.5" width="11.3" height="0.8" fill="#e0e0e0"/><rect x="1" y="135.0" width="11.3" height="0.8" fill="#e0e0e0"/><rect x="1" y="147.7" width="11.3" height="0.8" fill="#e0e0e0"/><rect x="1" y="160.8" width="11.3" height="0.8" fill="#e0e0e0"/><rect x="1" y="173.0" width="11.3" height="0.8" fill="#e0e0e0"/><rect x="1" y="185.88" width="11.3" height="0.8" fill="#e0e0e0"/><rect x="1" y="198.51" width="11.3" height="0.8" fill="#e0e0e0"/><rect x="1" y="211.14" width="11.3" height="0.8" fill="#e0e0e0"/><rect x="1" y="223.77" width="11.3" height="0.8" fill="#e0e0e0"/><rect x="1" y="236.4" width="11.3" height="0.8" fill="#e0e0e0"/><rect x="1" y="249.03" width="11.3" height="0.8" fill="#e0e0e0"/><rect x="1" y="261.66" width="11.3" height="0.8" fill="#e0e0e0"/><rect x="1" y="274.29" width="11.3" height="0.8" fill="#e0e0e0"/><rect x="1" y="286.92" width="11.3" height="0.8" fill="#e0e0e0"/><rect x="1" y="299.55" width="11.3" height="0.8" fill="#e0e0e0"/><rect x="1" y="312.18" width="11.3" height="0.8" fill="#e0e0e0"/><rect x="1" y="324.81" width="11.3" height="0.8" fill="#e0e0e0"/><rect x="1" y="337.44" width="11.3" height="0.8" fill="#e0e0e0"/><rect x="1" y="350.07000000000005" width="11.3" height="0.8" fill="#e0e0e0"/><rect x="1" y="362.70000000000005" width="11.3" height="0.8" fill="#e0e0e0"/><rect x="1" y="375.33000000000004" width="11.3" height="0.8" fill="#e0e0e0"/><path d="M11.4 96.5 L11.4 99.9 L7.2 99.9Z" fill="#d0d0d0"/><rect x="43.8" y="110" width="562.4000000000001" height="25.5" fill="#1f4e79"/><rect x="44.1" y="161.3" width="562.1" height="12.199999999999989" fill="#d4d4d4"/><rect x="102.6" y="173.5" width="39.80000000000001" height="12.879999999999995" fill="#ffeb9c"/><rect x="354.6" y="173.5" width="41.099999999999966" height="12.879999999999995" fill="#ffeb9c"/><rect x="102.6" y="186.38" width="39.80000000000001" height="12.629999999999995" fill="#ffc7ce"/><rect x="354.6" y="186.38" width="41.099999999999966" height="12.629999999999995" fill="#ffc7ce"/><rect x="102.6" y="199.01" width="39.80000000000001" height="12.629999999999995" fill="#c6efce"/><rect x="354.6" y="199.01" width="41.099999999999966" height="12.629999999999995" fill="#c6efce"/><rect x="102.6" y="211.64" width="39.80000000000001" height="12.630000000000024" fill="#ffeb9c"/><rect x="354.6" y="211.64" width="41.099999999999966" height="12.630000000000024" fill="#ffeb9c"/><rect x="102.6" y="224.27" width="39.80000000000001" height="12.629999999999995" fill="#ffc7ce"/><rect x="354.6" y="224.27" width="41.099999999999966" height="12.629999999999995" fill="#ffc7ce"/><rect x="102.6" y="236.9" width="39.80000000000001" height="12.629999999999995" fill="#c6efce"/><rect x="354.6" y="236.9" width="41.099999999999966" height="12.629999999999995" fill="#c6efce"/><rect x="102.6" y="249.53" width="39.80000000000001" height="12.630000000000024" fill="#ffeb9c"/><rect x="354.6" y="249.53" width="41.099999999999966" height="12.630000000000024" fill="#ffeb9c"/><rect x="102.6" y="262.16" width="39.80000000000001" height="12.629999999999995" fill="#ffc7ce"/><rect x="354.6" y="262.16" width="41.099999999999966" height="12.629999999999995" fill="#ffc7ce"/><rect x="102.6" y="274.79" width="39.80000000000001" height="12.629999999999995" fill="#c6efce"/><rect x="354.6" y="274.79" width="41.099999999999966" height="12.629999999999995" fill="#c6efce"/><rect x="102.6" y="287.42" width="39.80000000000001" height="12.629999999999995" fill="#ffeb9c"/><rect x="354.6" y="287.42" width="41.099999999999966" height="12.629999999999995" fill="#ffeb9c"/><rect x="102.6" y="300.05" width="39.80000000000001" height="12.629999999999995" fill="#ffeb9c"/><rect x="354.6" y="300.05" width="41.099999999999966" height="12.629999999999995" fill="#ffeb9c"/><rect x="102.6" y="312.68" width="39.80000000000001" height="12.629999999999995" fill="#ffc7ce"/><rect x="354.6" y="312.68" width="41.099999999999966" height="12.629999999999995" fill="#ffc7ce"/><rect x="102.6" y="325.31" width="39.80000000000001" height="12.629999999999995" fill="#c6efce"/><rect x="354.6" y="325.31" width="41.099999999999966" height="12.629999999999995" fill="#c6efce"/><rect x="102.6" y="337.94" width="39.80000000000001" height="12.630000000000052" fill="#ffeb9c"/><rect x="354.6" y="337.94" width="41.099999999999966" height="12.630000000000052" fill="#ffeb9c"/><rect x="102.6" y="350.57000000000005" width="39.80000000000001" height="12.629999999999995" fill="#ffc7ce"/><rect x="354.6" y="350.57000000000005" width="41.099999999999966" height="12.629999999999995" fill="#ffc7ce"/><rect x="102.6" y="363.20000000000005" width="39.80000000000001" height="12.629999999999995" fill="#c6efce"/><rect x="354.6" y="363.20000000000005" width="41.099999999999966" height="12.629999999999995" fill="#c6efce"/><rect x="43.6" y="160.8" width="563.1" height="1" fill="#b8b8b8"/><rect x="43.6" y="173.0" width="563.1" height="1" fill="#b8b8b8"/><rect x="43.6" y="185.88" width="563.1" height="1" fill="#b8b8b8"/><rect x="43.6" y="198.51" width="563.1" height="1" fill="#b8b8b8"/><rect x="43.6" y="211.14" width="563.1" height="1" fill="#b8b8b8"/><rect x="43.6" y="223.77" width="563.1" height="1" fill="#b8b8b8"/><rect x="43.6" y="236.4" width="563.1" height="1" fill="#b8b8b8"/><rect x="43.6" y="249.03" width="563.1" height="1" fill="#b8b8b8"/><rect x="43.6" y="261.66" width="563.1" height="1" fill="#b8b8b8"/><rect x="43.6" y="274.29" width="563.1" height="1" fill="#b8b8b8"/><rect x="43.6" y="286.92" width="563.1" height="1" fill="#b8b8b8"/><rect x="43.6" y="299.55" width="563.1" height="1" fill="#b8b8b8"/><rect x="43.6" y="312.18" width="563.1" height="1" fill="#b8b8b8"/><rect x="43.6" y="324.81" width="563.1" height="1" fill="#b8b8b8"/><rect x="43.6" y="337.44" width="563.1" height="1" fill="#b8b8b8"/><rect x="43.6" y="350.07000000000005" width="563.1" height="1" fill="#b8b8b8"/><rect x="43.6" y="362.70000000000005" width="563.1" height="1" fill="#b8b8b8"/><rect x="43.6" y="375.33000000000004" width="563.1" height="1" fill="#b8b8b8"/><rect x="43.6" y="160.8" width="1" height="215.53000000000003" fill="#c0c0c0"/><rect x="102.1" y="160.8" width="1" height="215.53000000000003" fill="#c0c0c0"/><rect x="141.9" y="160.8" width="1" height="215.53000000000003" fill="#c0c0c0"/><rect x="195.1" y="160.8" width="1" height="215.53000000000003" fill="#c0c0c0"/><rect x="264.7" y="160.8" width="1" height="215.53000000000003" fill="#c0c0c0"/><rect x="354.1" y="160.8" width="1" height="215.53000000000003" fill="#c0c0c0"/><rect x="395.2" y="160.8" width="1" height="215.53000000000003" fill="#c0c0c0"/><rect x="441.7" y="160.8" width="1" height="215.53000000000003" fill="#c0c0c0"/><rect x="605.7" y="160.8" width="1" height="215.53000000000003" fill="#c0c0c0"/></svg>
<div class="a t" style="left:26px;top:95px;font-size:6.8px;line-height:6.8px;color:#555;font-weight:normal;font-style:normal;font-family:'Liberation Sans',sans-serif;transform:matrix(1.0000,0,0,1,0.056,0.000);">A</div>
<div class="a t" style="left:70px;top:95px;font-size:6.8px;line-height:6.8px;color:#555;font-weight:normal;font-style:normal;font-family:'Liberation Sans',sans-serif;transform:matrix(1.0000,0,0,1,0.970,0.000);">B</div>
<div class="a t" style="left:120px;top:95px;font-size:6.8px;line-height:6.8px;color:#555;font-weight:normal;font-style:normal;font-family:'Liberation Sans',sans-serif;transform:matrix(1.0000,0,0,1,0.018,0.000);">C</div>
<div class="a t" style="left:166px;top:95px;font-size:6.8px;line-height:6.8px;color:#555;font-weight:normal;font-style:normal;font-family:'Liberation Sans',sans-serif;transform:matrix(1.0000,0,0,1,0.416,0.000);">D</div>
<div class="a t" style="left:227px;top:95px;font-size:6.8px;line-height:6.8px;color:#217346;font-weight:normal;font-style:normal;font-family:'Liberation Sans',sans-serif;transform:matrix(1.0000,0,0,1,0.986,0.000);">E</div>
<div class="a t" style="left:307px;top:95px;font-size:6.8px;line-height:6.8px;color:#555;font-weight:normal;font-style:normal;font-family:'Liberation Sans',sans-serif;transform:matrix(1.0000,0,0,1,0.690,0.000);">F</div>
<div class="a t" style="left:372px;top:95px;font-size:6.8px;line-height:6.8px;color:#555;font-weight:normal;font-style:normal;font-family:'Liberation Sans',sans-serif;transform:matrix(1.0000,0,0,1,0.600,0.000);">G</div>
<div class="a t" style="left:416px;top:95px;font-size:6.8px;line-height:6.8px;color:#555;font-weight:normal;font-style:normal;font-family:'Liberation Sans',sans-serif;transform:matrix(1.0000,0,0,1,0.502,0.000);">H</div>
<div class="a t" style="left:523px;top:95px;font-size:6.8px;line-height:6.8px;color:#555;font-weight:normal;font-style:normal;font-family:'Liberation Sans',sans-serif;transform:matrix(1.0000,0,0,1,0.248,0.000);">I</div>
<div class="a t" style="left:620px;top:95px;font-size:6.8px;line-height:6.8px;color:#555;font-weight:normal;font-style:normal;font-family:'Liberation Sans',sans-serif;transform:matrix(1.0000,0,0,1,0.320,0.000);">J</div>
<div class="a t" style="left:4px;top:103px;font-size:6.4px;line-height:6.4px;color:#555;font-weight:normal;font-style:normal;font-family:'Liberation Sans',sans-serif;transform:matrix(1.0000,0,0,1,0.512,0.600);">1</div>
<div class="a t" style="left:4px;top:129px;font-size:6.4px;line-height:6.4px;color:#555;font-weight:normal;font-style:normal;font-family:'Liberation Sans',sans-serif;transform:matrix(1.0000,0,0,1,0.608,0.100);">2</div>
<div class="a t" style="left:4px;top:141px;font-size:6.4px;line-height:6.4px;color:#555;font-weight:normal;font-style:normal;font-family:'Liberation Sans',sans-serif;transform:matrix(1.0000,0,0,1,0.640,0.800);">3</div>
<div class="a t" style="left:4px;top:154px;font-size:6.4px;line-height:6.4px;color:#555;font-weight:normal;font-style:normal;font-family:'Liberation Sans',sans-serif;transform:matrix(1.0000,0,0,1,0.640,0.900);">4</div>
<div class="a t" style="left:4px;top:167px;font-size:6.4px;line-height:6.4px;color:#555;font-weight:normal;font-style:normal;font-family:'Liberation Sans',sans-serif;transform:matrix(1.0000,0,0,1,0.608,0.100);">5</div>
<div class="a t" style="left:4px;top:179px;font-size:6.4px;line-height:6.4px;color:#555;font-weight:normal;font-style:normal;font-family:'Liberation Sans',sans-serif;transform:matrix(1.0000,0,0,1,0.608,0.980);">6</div>
<div class="a t" style="left:4px;top:192px;font-size:6.4px;line-height:6.4px;color:#555;font-weight:normal;font-style:normal;font-family:'Liberation Sans',sans-serif;transform:matrix(1.0000,0,0,1,0.608,0.610);">7</div>
<div class="a t" style="left:4px;top:205px;font-size:6.4px;line-height:6.4px;color:#555;font-weight:normal;font-style:normal;font-family:'Liberation Sans',sans-serif;transform:matrix(1.0000,0,0,1,0.640,0.240);">8</div>
<div class="a t" style="left:4px;top:217px;font-size:6.4px;line-height:6.4px;color:#555;font-weight:normal;font-style:normal;font-family:'Liberation Sans',sans-serif;transform:matrix(1.0000,0,0,1,0.608,0.870);">9</div>
<div class="a t" style="left:3px;top:230px;font-size:6.4px;line-height:6.4px;color:#555;font-weight:normal;font-style:normal;font-family:'Liberation Sans',sans-serif;transform:matrix(1.0000,0,0,1,0.288,0.500);">10</div>
<div class="a t" style="left:3px;top:243px;font-size:6.4px;line-height:6.4px;color:#555;font-weight:normal;font-style:normal;font-family:'Liberation Sans',sans-serif;transform:matrix(1.0000,0,0,1,0.576,0.130);">11</div>
<div class="a t" style="left:3px;top:255px;font-size:6.4px;line-height:6.4px;color:#555;font-weight:normal;font-style:normal;font-family:'Liberation Sans',sans-serif;transform:matrix(1.0000,0,0,1,0.320,0.760);">12</div>
<div class="a t" style="left:3px;top:268px;font-size:6.4px;line-height:6.4px;color:#555;font-weight:normal;font-style:normal;font-family:'Liberation Sans',sans-serif;transform:matrix(1.0000,0,0,1,0.320,0.390);">13</div>
<div class="a t" style="left:3px;top:281px;font-size:6.4px;line-height:6.4px;color:#555;font-weight:normal;font-style:normal;font-family:'Liberation Sans',sans-serif;transform:matrix(1.0000,0,0,1,0.256,0.020);">14</div>
<div class="a t" style="left:3px;top:293px;font-size:6.4px;line-height:6.4px;color:#555;font-weight:normal;font-style:normal;font-family:'Liberation Sans',sans-serif;transform:matrix(1.0000,0,0,1,0.288,0.650);">15</div>
<div class="a t" style="left:3px;top:306px;font-size:6.4px;line-height:6.4px;color:#555;font-weight:normal;font-style:normal;font-family:'Liberation Sans',sans-serif;transform:matrix(1.0000,0,0,1,0.320,0.280);">16</div>
<div class="a t" style="left:3px;top:318px;font-size:6.4px;line-height:6.4px;color:#555;font-weight:normal;font-style:normal;font-family:'Liberation Sans',sans-serif;transform:matrix(1.0000,0,0,1,0.320,0.910);">17</div>
<div class="a t" style="left:3px;top:331px;font-size:6.4px;line-height:6.4px;color:#555;font-weight:normal;font-style:normal;font-family:'Liberation Sans',sans-serif;transform:matrix(1.0000,0,0,1,0.320,0.540);">18</div>
<div class="a t" style="left:3px;top:344px;font-size:6.4px;line-height:6.4px;color:#555;font-weight:normal;font-style:normal;font-family:'Liberation Sans',sans-serif;transform:matrix(1.0000,0,0,1,0.320,0.170);">19</div>
<div class="a t" style="left:3px;top:356px;font-size:6.4px;line-height:6.4px;color:#555;font-weight:normal;font-style:normal;font-family:'Liberation Sans',sans-serif;transform:matrix(1.0000,0,0,1,0.384,0.800);">20</div>
<div class="a t" style="left:3px;top:369px;font-size:6.4px;line-height:6.4px;color:#555;font-weight:normal;font-style:normal;font-family:'Liberation Sans',sans-serif;transform:matrix(1.0000,0,0,1,0.416,0.430);">21</div>
<div class="a t" style="left:250px;top:117px;font-size:12px;line-height:12px;color:#e2e9f0;font-weight:normal;font-style:normal;font-family:'Liberation Sans',sans-serif;transform:matrix(1.0415,0,0,1,0.900,0.500);-webkit-text-stroke:0;">Roles and Responsibilities</div>
<div class="a t" style="left:44px;top:139px;font-size:6.8px;line-height:6.8px;color:#333;font-weight:normal;font-style:normal;font-family:'Liberation Sans',sans-serif;transform:matrix(0.9467,0,0,1,0.978,0.700);">SOP Name</div>
<div class="a t" style="left:44px;top:152px;font-size:6.8px;line-height:6.8px;color:#333;font-weight:normal;font-style:normal;font-family:'Liberation Sans',sans-serif;transform:matrix(0.9279,0,0,1,0.985,0.000);">SOP Manager</div>
<div class="a t" style="left:64px;top:165px;font-size:6.6px;line-height:6.6px;color:#262626;font-weight:bold;font-style:normal;font-family:'Liberation Sans',sans-serif;transform:matrix(0.9838,0,0,1,0.405,0.000);">SOP #</div>
<div class="a t" style="left:110px;top:165px;font-size:6.6px;line-height:6.6px;color:#262626;font-weight:bold;font-style:normal;font-family:'Liberation Sans',sans-serif;transform:matrix(1.0255,0,0,1,0.662,0.000);">(L/M/H)</div>
<div class="a t" style="left:150px;top:165px;font-size:6.6px;line-height:6.6px;color:#262626;font-weight:bold;font-style:normal;font-family:'Liberation Sans',sans-serif;transform:matrix(0.9843,0,0,1,0.445,0.000);">Date Issued</div>
<div class="a t" style="left:211px;top:165px;font-size:6.6px;line-height:6.6px;color:#262626;font-weight:bold;font-style:normal;font-family:'Liberation Sans',sans-serif;transform:matrix(0.9722,0,0,1,0.508,0.000);">Assigned To</div>
<div class="a t" style="left:302px;top:165px;font-size:6.6px;line-height:6.6px;color:#262626;font-weight:bold;font-style:normal;font-family:'Liberation Sans',sans-serif;transform:matrix(1.0076,0,0,1,0.534,0.000);">Role</div>
<div class="a t" style="left:365px;top:165px;font-size:6.6px;line-height:6.6px;color:#262626;font-weight:bold;font-style:normal;font-family:'Liberation Sans',sans-serif;transform:matrix(0.9020,0,0,1,0.821,0.000);">Status</div>
<div class="a t" style="left:404px;top:165px;font-size:6.6px;line-height:6.6px;color:#262626;font-weight:bold;font-style:normal;font-family:'Liberation Sans',sans-serif;transform:matrix(0.9922,0,0,1,0.142,0.000);">Due Date</div>
<div class="a t" style="left:506px;top:165px;font-size:6.6px;line-height:6.6px;color:#262626;font-weight:bold;font-style:normal;font-family:'Liberation Sans',sans-serif;transform:matrix(0.9650,0,0,1,0.354,0.000);">Description</div>
<div class="a" style="left:94.3px;top:165.6px;width:7px;height:7px;background:#f7f7f7;border:1px solid #c4c4c4"></div>
<svg class="a" style="left:96.1px;top:168.6px;" width="3.0" height="2.0" viewBox="0 0 3.0 2.0"><path d="M0 0 L3.0 0 L1.5 2.0Z" fill="#555"/></svg>
<div class="a" style="left:134.1px;top:165.6px;width:7px;height:7px;background:#f7f7f7;border:1px solid #c4c4c4"></div>
<svg class="a" style="left:135.9px;top:168.6px;" width="3.0" height="2.0" viewBox="0 0 3.0 2.0"><path d="M0 0 L3.0 0 L1.5 2.0Z" fill="#555"/></svg>
<div class="a" style="left:187.29999999999998px;top:165.6px;width:7px;height:7px;background:#f7f7f7;border:1px solid #c4c4c4"></div>
<svg class="a" style="left:189.1px;top:168.6px;" width="3.0" height="2.0" viewBox="0 0 3.0 2.0"><path d="M0 0 L3.0 0 L1.5 2.0Z" fill="#555"/></svg>
<div class="a" style="left:256.9px;top:165.6px;width:7px;height:7px;background:#f7f7f7;border:1px solid #c4c4c4"></div>
<svg class="a" style="left:258.7px;top:168.6px;" width="3.0" height="2.0" viewBox="0 0 3.0 2.0"><path d="M0 0 L3.0 0 L1.5 2.0Z" fill="#555"/></svg>
<div class="a" style="left:346.3px;top:165.6px;width:7px;height:7px;background:#f7f7f7;border:1px solid #c4c4c4"></div>
<svg class="a" style="left:348.1px;top:168.6px;" width="3.0" height="2.0" viewBox="0 0 3.0 2.0"><path d="M0 0 L3.0 0 L1.5 2.0Z" fill="#555"/></svg>
<div class="a" style="left:387.4px;top:165.6px;width:7px;height:7px;background:#f7f7f7;border:1px solid #c4c4c4"></div>
<svg class="a" style="left:389.2px;top:168.6px;" width="3.0" height="2.0" viewBox="0 0 3.0 2.0"><path d="M0 0 L3.0 0 L1.5 2.0Z" fill="#555"/></svg>
<div class="a" style="left:433.9px;top:165.6px;width:7px;height:7px;background:#f7f7f7;border:1px solid #c4c4c4"></div>
<svg class="a" style="left:435.7px;top:168.6px;" width="3.0" height="2.0" viewBox="0 0 3.0 2.0"><path d="M0 0 L3.0 0 L1.5 2.0Z" fill="#555"/></svg>
<div class="a" style="left:597.9000000000001px;top:165.6px;width:7px;height:7px;background:#f7f7f7;border:1px solid #c4c4c4"></div>
<svg class="a" style="left:599.7px;top:168.6px;" width="3.0" height="2.0" viewBox="0 0 3.0 2.0"><path d="M0 0 L3.0 0 L1.5 2.0Z" fill="#555"/></svg>
<div class="a t" style="left:68px;top:176px;font-size:7.0px;line-height:7.0px;color:#181818;font-weight:normal;font-style:normal;font-family:'Liberation Sans',sans-serif;transform:matrix(0.8998,0,0,1,0.396,0.340);">101</div>
<div class="a t" style="left:119px;top:176px;font-size:7.0px;line-height:7.0px;color:#a86e10;font-weight:normal;font-style:normal;font-family:'Liberation Sans',sans-serif;transform:matrix(0.8998,0,0,1,0.536,0.340);-webkit-text-stroke:0;">M</div>
<div class="a t" style="left:152px;top:176px;font-size:7.0px;line-height:7.0px;color:#181818;font-weight:normal;font-style:normal;font-family:'Liberation Sans',sans-serif;transform:matrix(0.8998,0,0,1,0.972,0.340);">01.01.2020</div>
<div class="a t" style="left:207px;top:176px;font-size:7.0px;line-height:7.0px;color:#181818;font-weight:normal;font-style:normal;font-family:'Liberation Sans',sans-serif;transform:matrix(0.8998,0,0,1,0.425,0.340);">Team Member 1</div>
<div class="a t" style="left:272px;top:176px;font-size:7.0px;line-height:7.0px;color:#181818;font-weight:normal;font-style:normal;font-family:'Liberation Sans',sans-serif;transform:matrix(0.8998,0,0,1,0.433,0.340);">Identify Role</div>
<div class="a t" style="left:366px;top:176px;font-size:7.0px;line-height:7.0px;color:#a86e10;font-weight:normal;font-style:normal;font-family:'Liberation Sans',sans-serif;transform:matrix(0.8998,0,0,1,0.504,0.340);-webkit-text-stroke:0.1px;">To-Do</div>
<div class="a t" style="left:402px;top:176px;font-size:7.0px;line-height:7.0px;color:#181818;font-weight:normal;font-style:normal;font-family:'Liberation Sans',sans-serif;transform:matrix(0.8998,0,0,1,0.772,0.340);">03.03.2020</div>
<div class="a t" style="left:448px;top:176px;font-size:7.0px;line-height:7.0px;color:#181818;font-weight:normal;font-style:normal;font-family:'Liberation Sans',sans-serif;transform:matrix(0.8998,0,0,1,0.996,0.340);">Brief Description</div>
<div class="a t" style="left:68px;top:189px;font-size:7.0px;line-height:7.0px;color:#181818;font-weight:normal;font-style:normal;font-family:'Liberation Sans',sans-serif;transform:matrix(0.8998,0,0,1,0.396,0.095);">102</div>
<div class="a t" style="left:119px;top:189px;font-size:7.0px;line-height:7.0px;color:#c42a38;font-weight:normal;font-style:normal;font-family:'Liberation Sans',sans-serif;transform:matrix(0.8998,0,0,1,0.883,0.095);-webkit-text-stroke:0;">H</div>
<div class="a t" style="left:152px;top:189px;font-size:7.0px;line-height:7.0px;color:#181818;font-weight:normal;font-style:normal;font-family:'Liberation Sans',sans-serif;transform:matrix(0.8998,0,0,1,0.972,0.095);">01.01.2020</div>
<div class="a t" style="left:207px;top:189px;font-size:7.0px;line-height:7.0px;color:#181818;font-weight:normal;font-style:normal;font-family:'Liberation Sans',sans-serif;transform:matrix(0.8998,0,0,1,0.425,0.095);">Team Member 2</div>
<div class="a t" style="left:272px;top:189px;font-size:7.0px;line-height:7.0px;color:#181818;font-weight:normal;font-style:normal;font-family:'Liberation Sans',sans-serif;transform:matrix(0.8998,0,0,1,0.433,0.095);">Identify Role</div>
<div class="a t" style="left:365px;top:189px;font-size:7.0px;line-height:7.0px;color:#c42a38;font-weight:normal;font-style:normal;font-family:'Liberation Sans',sans-serif;transform:matrix(0.8998,0,0,1,0.087,0.095);-webkit-text-stroke:0.1px;">Closed</div>
<div class="a t" style="left:402px;top:189px;font-size:7.0px;line-height:7.0px;color:#181818;font-weight:normal;font-style:normal;font-family:'Liberation Sans',sans-serif;transform:matrix(0.8998,0,0,1,0.772,0.095);">03.04.2020</div>
<div class="a t" style="left:448px;top:189px;font-size:7.0px;line-height:7.0px;color:#181818;font-weight:normal;font-style:normal;font-family:'Liberation Sans',sans-serif;transform:matrix(0.8998,0,0,1,0.996,0.095);">Brief Description</div>
<div class="a t" style="left:68px;top:201px;font-size:7.0px;line-height:7.0px;color:#181818;font-weight:normal;font-style:normal;font-family:'Liberation Sans',sans-serif;transform:matrix(0.8998,0,0,1,0.396,0.725);">103</div>
<div class="a t" style="left:120px;top:201px;font-size:7.0px;line-height:7.0px;color:#268040;font-weight:normal;font-style:normal;font-family:'Liberation Sans',sans-serif;transform:matrix(0.8998,0,0,1,0.260,0.725);-webkit-text-stroke:0;">L</div>
<div class="a t" style="left:152px;top:201px;font-size:7.0px;line-height:7.0px;color:#181818;font-weight:normal;font-style:normal;font-family:'Liberation Sans',sans-serif;transform:matrix(0.8998,0,0,1,0.972,0.725);">01.01.2020</div>
<div class="a t" style="left:207px;top:201px;font-size:7.0px;line-height:7.0px;color:#181818;font-weight:normal;font-style:normal;font-family:'Liberation Sans',sans-serif;transform:matrix(0.8998,0,0,1,0.425,0.725);">Team Member 3</div>
<div class="a t" style="left:272px;top:201px;font-size:7.0px;line-height:7.0px;color:#181818;font-weight:normal;font-style:normal;font-family:'Liberation Sans',sans-serif;transform:matrix(0.8998,0,0,1,0.433,0.725);">Identify Role</div>
<div class="a t" style="left:366px;top:201px;font-size:7.0px;line-height:7.0px;color:#268040;font-weight:normal;font-style:normal;font-family:'Liberation Sans',sans-serif;transform:matrix(0.8998,0,0,1,0.127,0.725);-webkit-text-stroke:0.1px;">Query</div>
<div class="a t" style="left:402px;top:201px;font-size:7.0px;line-height:7.0px;color:#181818;font-weight:normal;font-style:normal;font-family:'Liberation Sans',sans-serif;transform:matrix(0.8998,0,0,1,0.772,0.725);">03.05.2020</div>
<div class="a t" style="left:448px;top:201px;font-size:7.0px;line-height:7.0px;color:#181818;font-weight:normal;font-style:normal;font-family:'Liberation Sans',sans-serif;transform:matrix(0.8998,0,0,1,0.996,0.725);">Brief Description</div>
<div class="a t" style="left:68px;top:214px;font-size:7.0px;line-height:7.0px;color:#181818;font-weight:normal;font-style:normal;font-family:'Liberation Sans',sans-serif;transform:matrix(0.8998,0,0,1,0.333,0.355);">104</div>
<div class="a t" style="left:119px;top:214px;font-size:7.0px;line-height:7.0px;color:#a86e10;font-weight:normal;font-style:normal;font-family:'Liberation Sans',sans-serif;transform:matrix(0.8998,0,0,1,0.536,0.355);-webkit-text-stroke:0;">M</div>
<div class="a t" style="left:152px;top:214px;font-size:7.0px;line-height:7.0px;color:#181818;font-weight:normal;font-style:normal;font-family:'Liberation Sans',sans-serif;transform:matrix(0.8998,0,0,1,0.972,0.355);">01.01.2020</div>
<div class="a t" style="left:207px;top:214px;font-size:7.0px;line-height:7.0px;color:#181818;font-weight:normal;font-style:normal;font-family:'Liberation Sans',sans-serif;transform:matrix(0.8998,0,0,1,0.425,0.355);">Team Member 1</div>
<div class="a t" style="left:272px;top:214px;font-size:7.0px;line-height:7.0px;color:#181818;font-weight:normal;font-style:normal;font-family:'Liberation Sans',sans-serif;transform:matrix(0.8998,0,0,1,0.433,0.355);">Identify Role</div>
<div class="a t" style="left:366px;top:214px;font-size:7.0px;line-height:7.0px;color:#a86e10;font-weight:normal;font-style:normal;font-family:'Liberation Sans',sans-serif;transform:matrix(0.8998,0,0,1,0.504,0.355);-webkit-text-stroke:0.1px;">To-Do</div>
<div class="a t" style="left:402px;top:214px;font-size:7.0px;line-height:7.0px;color:#181818;font-weight:normal;font-style:normal;font-family:'Liberation Sans',sans-serif;transform:matrix(0.8998,0,0,1,0.772,0.355);">03.06.2020</div>
<div class="a t" style="left:448px;top:214px;font-size:7.0px;line-height:7.0px;color:#181818;font-weight:normal;font-style:normal;font-family:'Liberation Sans',sans-serif;transform:matrix(0.8998,0,0,1,0.996,0.355);">Brief Description</div>
<div class="a t" style="left:68px;top:226px;font-size:7.0px;line-height:7.0px;color:#181818;font-weight:normal;font-style:normal;font-family:'Liberation Sans',sans-serif;transform:matrix(0.8998,0,0,1,0.365,0.985);">105</div>
<div class="a t" style="left:119px;top:226px;font-size:7.0px;line-height:7.0px;color:#c42a38;font-weight:normal;font-style:normal;font-family:'Liberation Sans',sans-serif;transform:matrix(0.8998,0,0,1,0.883,0.985);-webkit-text-stroke:0;">H</div>
<div class="a t" style="left:152px;top:226px;font-size:7.0px;line-height:7.0px;color:#181818;font-weight:normal;font-style:normal;font-family:'Liberation Sans',sans-serif;transform:matrix(0.8998,0,0,1,0.972,0.985);">01.01.2020</div>
<div class="a t" style="left:207px;top:226px;font-size:7.0px;line-height:7.0px;color:#181818;font-weight:normal;font-style:normal;font-family:'Liberation Sans',sans-serif;transform:matrix(0.8998,0,0,1,0.425,0.985);">Team Member 2</div>
<div class="a t" style="left:272px;top:226px;font-size:7.0px;line-height:7.0px;color:#181818;font-weight:normal;font-style:normal;font-family:'Liberation Sans',sans-serif;transform:matrix(0.8998,0,0,1,0.433,0.985);">Identify Role</div>
<div class="a t" style="left:365px;top:226px;font-size:7.0px;line-height:7.0px;color:#c42a38;font-weight:normal;font-style:normal;font-family:'Liberation Sans',sans-serif;transform:matrix(0.8998,0,0,1,0.087,0.985);-webkit-text-stroke:0.1px;">Closed</div>
<div class="a t" style="left:402px;top:226px;font-size:7.0px;line-height:7.0px;color:#181818;font-weight:normal;font-style:normal;font-family:'Liberation Sans',sans-serif;transform:matrix(0.8998,0,0,1,0.772,0.985);">03.07.2020</div>
<div class="a t" style="left:448px;top:226px;font-size:7.0px;line-height:7.0px;color:#181818;font-weight:normal;font-style:normal;font-family:'Liberation Sans',sans-serif;transform:matrix(0.8998,0,0,1,0.996,0.985);">Brief Description</div>
<div class="a t" style="left:68px;top:239px;font-size:7.0px;line-height:7.0px;color:#181818;font-weight:normal;font-style:normal;font-family:'Liberation Sans',sans-serif;transform:matrix(0.8998,0,0,1,0.396,0.615);">106</div>
<div class="a t" style="left:120px;top:239px;font-size:7.0px;line-height:7.0px;color:#268040;font-weight:normal;font-style:normal;font-family:'Liberation Sans',sans-serif;transform:matrix(0.8998,0,0,1,0.260,0.615);-webkit-text-stroke:0;">L</div>
<div class="a t" style="left:152px;top:239px;font-size:7.0px;line-height:7.0px;color:#181818;font-weight:normal;font-style:normal;font-family:'Liberation Sans',sans-serif;transform:matrix(0.8998,0,0,1,0.972,0.615);">01.01.2020</div>
<div class="a t" style="left:207px;top:239px;font-size:7.0px;line-height:7.0px;color:#181818;font-weight:normal;font-style:normal;font-family:'Liberation Sans',sans-serif;transform:matrix(0.8998,0,0,1,0.425,0.615);">Team Member 3</div>
<div class="a t" style="left:272px;top:239px;font-size:7.0px;line-height:7.0px;color:#181818;font-weight:normal;font-style:normal;font-family:'Liberation Sans',sans-serif;transform:matrix(0.8998,0,0,1,0.433,0.615);">Identify Role</div>
<div class="a t" style="left:366px;top:239px;font-size:7.0px;line-height:7.0px;color:#268040;font-weight:normal;font-style:normal;font-family:'Liberation Sans',sans-serif;transform:matrix(0.8998,0,0,1,0.127,0.615);-webkit-text-stroke:0.1px;">Query</div>
<div class="a t" style="left:402px;top:239px;font-size:7.0px;line-height:7.0px;color:#181818;font-weight:normal;font-style:normal;font-family:'Liberation Sans',sans-serif;transform:matrix(0.8998,0,0,1,0.772,0.615);">03.03.2020</div>
<div class="a t" style="left:448px;top:239px;font-size:7.0px;line-height:7.0px;color:#181818;font-weight:normal;font-style:normal;font-family:'Liberation Sans',sans-serif;transform:matrix(0.8998,0,0,1,0.996,0.615);">Brief Description</div>
<div class="a t" style="left:68px;top:252px;font-size:7.0px;line-height:7.0px;color:#181818;font-weight:normal;font-style:normal;font-family:'Liberation Sans',sans-serif;transform:matrix(0.8998,0,0,1,0.396,0.245);">107</div>
<div class="a t" style="left:119px;top:252px;font-size:7.0px;line-height:7.0px;color:#a86e10;font-weight:normal;font-style:normal;font-family:'Liberation Sans',sans-serif;transform:matrix(0.8998,0,0,1,0.536,0.245);-webkit-text-stroke:0;">M</div>
<div class="a t" style="left:152px;top:252px;font-size:7.0px;line-height:7.0px;color:#181818;font-weight:normal;font-style:normal;font-family:'Liberation Sans',sans-serif;transform:matrix(0.8998,0,0,1,0.972,0.245);">01.01.2020</div>
<div class="a t" style="left:207px;top:252px;font-size:7.0px;line-height:7.0px;color:#181818;font-weight:normal;font-style:normal;font-family:'Liberation Sans',sans-serif;transform:matrix(0.8998,0,0,1,0.425,0.245);">Team Member 1</div>
<div class="a t" style="left:272px;top:252px;font-size:7.0px;line-height:7.0px;color:#181818;font-weight:normal;font-style:normal;font-family:'Liberation Sans',sans-serif;transform:matrix(0.8998,0,0,1,0.433,0.245);">Identify Role</div>
<div class="a t" style="left:366px;top:252px;font-size:7.0px;line-height:7.0px;color:#a86e10;font-weight:normal;font-style:normal;font-family:'Liberation Sans',sans-serif;transform:matrix(0.8998,0,0,1,0.504,0.245);-webkit-text-stroke:0.1px;">To-Do</div>
<div class="a t" style="left:402px;top:252px;font-size:7.0px;line-height:7.0px;color:#181818;font-weight:normal;font-style:normal;font-family:'Liberation Sans',sans-serif;transform:matrix(0.8998,0,0,1,0.772,0.245);">03.03.2020</div>
<div class="a t" style="left:448px;top:252px;font-size:7.0px;line-height:7.0px;color:#181818;font-weight:normal;font-style:normal;font-family:'Liberation Sans',sans-serif;transform:matrix(0.8998,0,0,1,0.996,0.245);">Brief Description</div>
<div class="a t" style="left:68px;top:264px;font-size:7.0px;line-height:7.0px;color:#181818;font-weight:normal;font-style:normal;font-family:'Liberation Sans',sans-serif;transform:matrix(0.8998,0,0,1,0.396,0.875);">108</div>
<div class="a t" style="left:119px;top:264px;font-size:7.0px;line-height:7.0px;color:#c42a38;font-weight:normal;font-style:normal;font-family:'Liberation Sans',sans-serif;transform:matrix(0.8998,0,0,1,0.883,0.875);-webkit-text-stroke:0;">H</div>
<div class="a t" style="left:152px;top:264px;font-size:7.0px;line-height:7.0px;color:#181818;font-weight:normal;font-style:normal;font-family:'Liberation Sans',sans-serif;transform:matrix(0.8998,0,0,1,0.972,0.875);">01.01.2020</div>
<div class="a t" style="left:207px;top:264px;font-size:7.0px;line-height:7.0px;color:#181818;font-weight:normal;font-style:normal;font-family:'Liberation Sans',sans-serif;transform:matrix(0.8998,0,0,1,0.425,0.875);">Team Member 2</div>
<div class="a t" style="left:272px;top:264px;font-size:7.0px;line-height:7.0px;color:#181818;font-weight:normal;font-style:normal;font-family:'Liberation Sans',sans-serif;transform:matrix(0.8998,0,0,1,0.433,0.875);">Identify Role</div>
<div class="a t" style="left:365px;top:264px;font-size:7.0px;line-height:7.0px;color:#c42a38;font-weight:normal;font-style:normal;font-family:'Liberation Sans',sans-serif;transform:matrix(0.8998,0,0,1,0.087,0.875);-webkit-text-stroke:0.1px;">Closed</div>
<div class="a t" style="left:402px;top:264px;font-size:7.0px;line-height:7.0px;color:#181818;font-weight:normal;font-style:normal;font-family:'Liberation Sans',sans-serif;transform:matrix(0.8998,0,0,1,0.772,0.875);">03.03.2020</div>
<div class="a t" style="left:448px;top:264px;font-size:7.0px;line-height:7.0px;color:#181818;font-weight:normal;font-style:normal;font-family:'Liberation Sans',sans-serif;transform:matrix(0.8998,0,0,1,0.996,0.875);">Brief Description</div>
<div class="a t" style="left:68px;top:277px;font-size:7.0px;line-height:7.0px;color:#181818;font-weight:normal;font-style:normal;font-family:'Liberation Sans',sans-serif;transform:matrix(0.8998,0,0,1,0.396,0.505);">109</div>
<div class="a t" style="left:120px;top:277px;font-size:7.0px;line-height:7.0px;color:#268040;font-weight:normal;font-style:normal;font-family:'Liberation Sans',sans-serif;transform:matrix(0.8998,0,0,1,0.260,0.505);-webkit-text-stroke:0;">L</div>
<div class="a t" style="left:152px;top:277px;font-size:7.0px;line-height:7.0px;color:#181818;font-weight:normal;font-style:normal;font-family:'Liberation Sans',sans-serif;transform:matrix(0.8998,0,0,1,0.972,0.505);">01.01.2020</div>
<div class="a t" style="left:207px;top:277px;font-size:7.0px;line-height:7.0px;color:#181818;font-weight:normal;font-style:normal;font-family:'Liberation Sans',sans-serif;transform:matrix(0.8998,0,0,1,0.425,0.505);">Team Member 3</div>
<div class="a t" style="left:272px;top:277px;font-size:7.0px;line-height:7.0px;color:#181818;font-weight:normal;font-style:normal;font-family:'Liberation Sans',sans-serif;transform:matrix(0.8998,0,0,1,0.433,0.505);">Identify Role</div>
<div class="a t" style="left:366px;top:277px;font-size:7.0px;line-height:7.0px;color:#268040;font-weight:normal;font-style:normal;font-family:'Liberation Sans',sans-serif;transform:matrix(0.8998,0,0,1,0.127,0.505);-webkit-text-stroke:0.1px;">Query</div>
<div class="a t" style="left:402px;top:277px;font-size:7.0px;line-height:7.0px;color:#181818;font-weight:normal;font-style:normal;font-family:'Liberation Sans',sans-serif;transform:matrix(0.8998,0,0,1,0.772,0.505);">03.03.2020</div>
<div class="a t" style="left:448px;top:277px;font-size:7.0px;line-height:7.0px;color:#181818;font-weight:normal;font-style:normal;font-family:'Liberation Sans',sans-serif;transform:matrix(0.8998,0,0,1,0.996,0.505);">Brief Description</div>
<div class="a t" style="left:68px;top:290px;font-size:7.0px;line-height:7.0px;color:#181818;font-weight:normal;font-style:normal;font-family:'Liberation Sans',sans-serif;transform:matrix(0.8998,0,0,1,0.585,0.135);">110</div>
<div class="a t" style="left:119px;top:290px;font-size:7.0px;line-height:7.0px;color:#a86e10;font-weight:normal;font-style:normal;font-family:'Liberation Sans',sans-serif;transform:matrix(0.8998,0,0,1,0.536,0.135);-webkit-text-stroke:0;">M</div>
<div class="a t" style="left:152px;top:290px;font-size:7.0px;line-height:7.0px;color:#181818;font-weight:normal;font-style:normal;font-family:'Liberation Sans',sans-serif;transform:matrix(0.8998,0,0,1,0.972,0.135);">01.01.2020</div>
<div class="a t" style="left:207px;top:290px;font-size:7.0px;line-height:7.0px;color:#181818;font-weight:normal;font-style:normal;font-family:'Liberation Sans',sans-serif;transform:matrix(0.8998,0,0,1,0.425,0.135);">Team Member 1</div>
<div class="a t" style="left:272px;top:290px;font-size:7.0px;line-height:7.0px;color:#181818;font-weight:normal;font-style:normal;font-family:'Liberation Sans',sans-serif;transform:matrix(0.8998,0,0,1,0.433,0.135);">Identify Role</div>
<div class="a t" style="left:366px;top:290px;font-size:7.0px;line-height:7.0px;color:#a86e10;font-weight:normal;font-style:normal;font-family:'Liberation Sans',sans-serif;transform:matrix(0.8998,0,0,1,0.504,0.135);-webkit-text-stroke:0.1px;">To-Do</div>
<div class="a t" style="left:402px;top:290px;font-size:7.0px;line-height:7.0px;color:#181818;font-weight:normal;font-style:normal;font-family:'Liberation Sans',sans-serif;transform:matrix(0.8998,0,0,1,0.772,0.135);">03.03.2020</div>
<div class="a t" style="left:448px;top:290px;font-size:7.0px;line-height:7.0px;color:#181818;font-weight:normal;font-style:normal;font-family:'Liberation Sans',sans-serif;transform:matrix(0.8998,0,0,1,0.996,0.135);">Brief Description</div>
<div class="a t" style="left:68px;top:302px;font-size:7.0px;line-height:7.0px;color:#181818;font-weight:normal;font-style:normal;font-family:'Liberation Sans',sans-serif;transform:matrix(0.8998,0,0,1,0.396,0.765);">101</div>
<div class="a t" style="left:119px;top:302px;font-size:7.0px;line-height:7.0px;color:#a86e10;font-weight:normal;font-style:normal;font-family:'Liberation Sans',sans-serif;transform:matrix(0.8998,0,0,1,0.536,0.765);-webkit-text-stroke:0;">M</div>
<div class="a t" style="left:152px;top:302px;font-size:7.0px;line-height:7.0px;color:#181818;font-weight:normal;font-style:normal;font-family:'Liberation Sans',sans-serif;transform:matrix(0.8998,0,0,1,0.972,0.765);">01.01.2020</div>
<div class="a t" style="left:207px;top:302px;font-size:7.0px;line-height:7.0px;color:#181818;font-weight:normal;font-style:normal;font-family:'Liberation Sans',sans-serif;transform:matrix(0.8998,0,0,1,0.425,0.765);">Team Member 2</div>
<div class="a t" style="left:272px;top:302px;font-size:7.0px;line-height:7.0px;color:#181818;font-weight:normal;font-style:normal;font-family:'Liberation Sans',sans-serif;transform:matrix(0.8998,0,0,1,0.433,0.765);">Identify Role</div>
<div class="a t" style="left:366px;top:302px;font-size:7.0px;line-height:7.0px;color:#a86e10;font-weight:normal;font-style:normal;font-family:'Liberation Sans',sans-serif;transform:matrix(0.8998,0,0,1,0.504,0.765);-webkit-text-stroke:0.1px;">To-Do</div>
<div class="a t" style="left:402px;top:302px;font-size:7.0px;line-height:7.0px;color:#181818;font-weight:normal;font-style:normal;font-family:'Liberation Sans',sans-serif;transform:matrix(0.8998,0,0,1,0.772,0.765);">03.03.2020</div>
<div class="a t" style="left:448px;top:302px;font-size:7.0px;line-height:7.0px;color:#181818;font-weight:normal;font-style:normal;font-family:'Liberation Sans',sans-serif;transform:matrix(0.8998,0,0,1,0.996,0.765);">Brief Description</div>
<div class="a t" style="left:68px;top:315px;font-size:7.0px;line-height:7.0px;color:#181818;font-weight:normal;font-style:normal;font-family:'Liberation Sans',sans-serif;transform:matrix(0.8998,0,0,1,0.396,0.395);">102</div>
<div class="a t" style="left:119px;top:315px;font-size:7.0px;line-height:7.0px;color:#c42a38;font-weight:normal;font-style:normal;font-family:'Liberation Sans',sans-serif;transform:matrix(0.8998,0,0,1,0.883,0.395);-webkit-text-stroke:0;">H</div>
<div class="a t" style="left:152px;top:315px;font-size:7.0px;line-height:7.0px;color:#181818;font-weight:normal;font-style:normal;font-family:'Liberation Sans',sans-serif;transform:matrix(0.8998,0,0,1,0.972,0.395);">01.01.2020</div>
<div class="a t" style="left:207px;top:315px;font-size:7.0px;line-height:7.0px;color:#181818;font-weight:normal;font-style:normal;font-family:'Liberation Sans',sans-serif;transform:matrix(0.8998,0,0,1,0.425,0.395);">Team Member 3</div>
<div class="a t" style="left:272px;top:315px;font-size:7.0px;line-height:7.0px;color:#181818;font-weight:normal;font-style:normal;font-family:'Liberation Sans',sans-serif;transform:matrix(0.8998,0,0,1,0.433,0.395);">Identify Role</div>
<div class="a t" style="left:365px;top:315px;font-size:7.0px;line-height:7.0px;color:#c42a38;font-weight:normal;font-style:normal;font-family:'Liberation Sans',sans-serif;transform:matrix(0.8998,0,0,1,0.087,0.395);-webkit-text-stroke:0.1px;">Closed</div>
<div class="a t" style="left:402px;top:315px;font-size:7.0px;line-height:7.0px;color:#181818;font-weight:normal;font-style:normal;font-family:'Liberation Sans',sans-serif;transform:matrix(0.8998,0,0,1,0.772,0.395);">03.03.2020</div>
<div class="a t" style="left:448px;top:315px;font-size:7.0px;line-height:7.0px;color:#181818;font-weight:normal;font-style:normal;font-family:'Liberation Sans',sans-serif;transform:matrix(0.8998,0,0,1,0.996,0.395);">Brief Description</div>
<div class="a t" style="left:68px;top:328px;font-size:7.0px;line-height:7.0px;color:#181818;font-weight:normal;font-style:normal;font-family:'Liberation Sans',sans-serif;transform:matrix(0.8998,0,0,1,0.396,0.025);">103</div>
<div class="a t" style="left:120px;top:328px;font-size:7.0px;line-height:7.0px;color:#268040;font-weight:normal;font-style:normal;font-family:'Liberation Sans',sans-serif;transform:matrix(0.8998,0,0,1,0.260,0.025);-webkit-text-stroke:0;">L</div>
<div class="a t" style="left:152px;top:328px;font-size:7.0px;line-height:7.0px;color:#181818;font-weight:normal;font-style:normal;font-family:'Liberation Sans',sans-serif;transform:matrix(0.8998,0,0,1,0.972,0.025);">01.01.2020</div>
<div class="a t" style="left:207px;top:328px;font-size:7.0px;line-height:7.0px;color:#181818;font-weight:normal;font-style:normal;font-family:'Liberation Sans',sans-serif;transform:matrix(0.8998,0,0,1,0.425,0.025);">Team Member 1</div>
<div class="a t" style="left:272px;top:328px;font-size:7.0px;line-height:7.0px;color:#181818;font-weight:normal;font-style:normal;font-family:'Liberation Sans',sans-serif;transform:matrix(0.8998,0,0,1,0.433,0.025);">Identify Role</div>
<div class="a t" style="left:366px;top:328px;font-size:7.0px;line-height:7.0px;color:#268040;font-weight:normal;font-style:normal;font-family:'Liberation Sans',sans-serif;transform:matrix(0.8998,0,0,1,0.127,0.025);-webkit-text-stroke:0.1px;">Query</div>
<div class="a t" style="left:402px;top:328px;font-size:7.0px;line-height:7.0px;color:#181818;font-weight:normal;font-style:normal;font-family:'Liberation Sans',sans-serif;transform:matrix(0.8998,0,0,1,0.772,0.025);">03.03.2020</div>
<div class="a t" style="left:448px;top:328px;font-size:7.0px;line-height:7.0px;color:#181818;font-weight:normal;font-style:normal;font-family:'Liberation Sans',sans-serif;transform:matrix(0.8998,0,0,1,0.996,0.025);">Brief Description</div>
<div class="a t" style="left:68px;top:340px;font-size:7.0px;line-height:7.0px;color:#181818;font-weight:normal;font-style:normal;font-family:'Liberation Sans',sans-serif;transform:matrix(0.8998,0,0,1,0.333,0.655);">104</div>
<div class="a t" style="left:119px;top:340px;font-size:7.0px;line-height:7.0px;color:#a86e10;font-weight:normal;font-style:normal;font-family:'Liberation Sans',sans-serif;transform:matrix(0.8998,0,0,1,0.536,0.655);-webkit-text-stroke:0;">M</div>
<div class="a t" style="left:152px;top:340px;font-size:7.0px;line-height:7.0px;color:#181818;font-weight:normal;font-style:normal;font-family:'Liberation Sans',sans-serif;transform:matrix(0.8998,0,0,1,0.972,0.655);">01.01.2020</div>
<div class="a t" style="left:207px;top:340px;font-size:7.0px;line-height:7.0px;color:#181818;font-weight:normal;font-style:normal;font-family:'Liberation Sans',sans-serif;transform:matrix(0.8998,0,0,1,0.425,0.655);">Team Member 2</div>
<div class="a t" style="left:272px;top:340px;font-size:7.0px;line-height:7.0px;color:#181818;font-weight:normal;font-style:normal;font-family:'Liberation Sans',sans-serif;transform:matrix(0.8998,0,0,1,0.433,0.655);">Identify Role</div>
<div class="a t" style="left:366px;top:340px;font-size:7.0px;line-height:7.0px;color:#a86e10;font-weight:normal;font-style:normal;font-family:'Liberation Sans',sans-serif;transform:matrix(0.8998,0,0,1,0.504,0.655);-webkit-text-stroke:0.1px;">To-Do</div>
<div class="a t" style="left:402px;top:340px;font-size:7.0px;line-height:7.0px;color:#181818;font-weight:normal;font-style:normal;font-family:'Liberation Sans',sans-serif;transform:matrix(0.8998,0,0,1,0.772,0.655);">03.03.2020</div>
<div class="a t" style="left:448px;top:340px;font-size:7.0px;line-height:7.0px;color:#181818;font-weight:normal;font-style:normal;font-family:'Liberation Sans',sans-serif;transform:matrix(0.8998,0,0,1,0.996,0.655);">Brief Description</div>
<div class="a t" style="left:68px;top:353px;font-size:7.0px;line-height:7.0px;color:#181818;font-weight:normal;font-style:normal;font-family:'Liberation Sans',sans-serif;transform:matrix(0.8998,0,0,1,0.365,0.285);">105</div>
<div class="a t" style="left:119px;top:353px;font-size:7.0px;line-height:7.0px;color:#c42a38;font-weight:normal;font-style:normal;font-family:'Liberation Sans',sans-serif;transform:matrix(0.8998,0,0,1,0.883,0.285);-webkit-text-stroke:0;">H</div>
<div class="a t" style="left:152px;top:353px;font-size:7.0px;line-height:7.0px;color:#181818;font-weight:normal;font-style:normal;font-family:'Liberation Sans',sans-serif;transform:matrix(0.8998,0,0,1,0.972,0.285);">01.01.2020</div>
<div class="a t" style="left:207px;top:353px;font-size:7.0px;line-height:7.0px;color:#181818;font-weight:normal;font-style:normal;font-family:'Liberation Sans',sans-serif;transform:matrix(0.8998,0,0,1,0.425,0.285);">Team Member 3</div>
<div class="a t" style="left:272px;top:353px;font-size:7.0px;line-height:7.0px;color:#181818;font-weight:normal;font-style:normal;font-family:'Liberation Sans',sans-serif;transform:matrix(0.8998,0,0,1,0.433,0.285);">Identify Role</div>
<div class="a t" style="left:365px;top:353px;font-size:7.0px;line-height:7.0px;color:#c42a38;font-weight:normal;font-style:normal;font-family:'Liberation Sans',sans-serif;transform:matrix(0.8998,0,0,1,0.087,0.285);-webkit-text-stroke:0.1px;">Closed</div>
<div class="a t" style="left:402px;top:353px;font-size:7.0px;line-height:7.0px;color:#181818;font-weight:normal;font-style:normal;font-family:'Liberation Sans',sans-serif;transform:matrix(0.8998,0,0,1,0.772,0.285);">03.03.2020</div>
<div class="a t" style="left:448px;top:353px;font-size:7.0px;line-height:7.0px;color:#181818;font-weight:normal;font-style:normal;font-family:'Liberation Sans',sans-serif;transform:matrix(0.8998,0,0,1,0.996,0.285);">Brief Description</div>
<div class="a t" style="left:68px;top:365px;font-size:7.0px;line-height:7.0px;color:#181818;font-weight:normal;font-style:normal;font-family:'Liberation Sans',sans-serif;transform:matrix(0.8998,0,0,1,0.396,0.915);">106</div>
<div class="a t" style="left:120px;top:365px;font-size:7.0px;line-height:7.0px;color:#268040;font-weight:normal;font-style:normal;font-family:'Liberation Sans',sans-serif;transform:matrix(0.8998,0,0,1,0.260,0.915);-webkit-text-stroke:0;">L</div>
<div class="a t" style="left:152px;top:365px;font-size:7.0px;line-height:7.0px;color:#181818;font-weight:normal;font-style:normal;font-family:'Liberation Sans',sans-serif;transform:matrix(0.8998,0,0,1,0.972,0.915);">01.01.2020</div>
<div class="a t" style="left:207px;top:365px;font-size:7.0px;line-height:7.0px;color:#181818;font-weight:normal;font-style:normal;font-family:'Liberation Sans',sans-serif;transform:matrix(0.8998,0,0,1,0.425,0.915);">Team Member 1</div>
<div class="a t" style="left:272px;top:365px;font-size:7.0px;line-height:7.0px;color:#181818;font-weight:normal;font-style:normal;font-family:'Liberation Sans',sans-serif;transform:matrix(0.8998,0,0,1,0.433,0.915);">Identify Role</div>
<div class="a t" style="left:366px;top:365px;font-size:7.0px;line-height:7.0px;color:#268040;font-weight:normal;font-style:normal;font-family:'Liberation Sans',sans-serif;transform:matrix(0.8998,0,0,1,0.127,0.915);-webkit-text-stroke:0.1px;">Query</div>
<div class="a t" style="left:402px;top:365px;font-size:7.0px;line-height:7.0px;color:#181818;font-weight:normal;font-style:normal;font-family:'Liberation Sans',sans-serif;transform:matrix(0.8998,0,0,1,0.772,0.915);">03.03.2020</div>
<div class="a t" style="left:448px;top:365px;font-size:7.0px;line-height:7.0px;color:#181818;font-weight:normal;font-style:normal;font-family:'Liberation Sans',sans-serif;transform:matrix(0.8998,0,0,1,0.996,0.915);">Brief Description</div>
<div class="a" style="left:644.5px;top:101.5px;width:10px;height:274px;background:#fff"></div>
<div class="a" style="left:644.3px;top:101.5px;width:0.8px;height:274px;background:#e2e2e2"></div>
<div class="a" style="left:646.2px;top:94.5px;width:7.5px;height:8.1px;background:#fff;border:1px solid #dcdcdc"></div>
<svg class="a" style="left:648.2px;top:97px;" width="3.6" height="2.2" viewBox="0 0 3.6 2.2"><path d="M0 2.2 L1.8 0 L3.6 2.2Z" fill="#555"/></svg>
<div class="a" style="left:646.2px;top:102.5px;width:7.6px;height:223px;background:#fff;border:1px solid #d8d8d8"></div>
<div class="a" style="left:646.2px;top:325.5px;width:7.6px;height:43px;background:#e9e9ee"></div>
<div class="a" style="left:646.8px;top:368.4px;width:7.2px;height:6.6px;background:#fff;border:1px solid #dcdcdc"></div>
<svg class="a" style="left:648.6px;top:371px;" width="3.6" height="2.2" viewBox="0 0 3.6 2.2"><path d="M0 0 L3.6 0 L1.8 2.2Z" fill="#555"/></svg>
<div class="a" style="left:1px;top:375px;width:654px;height:13px;background:#e9eff6"></div>
<div class="a" style="left:0px;top:388px;width:656px;height:1px;background:#91b8a9"></div>
<svg class="a" style="left:13.3px;top:379.8px;" width="2.4" height="3.6" viewBox="0 0 2.4 3.6"><path d="M2.1 0.2 L0.4 1.8 L2.1 3.4" fill="none" stroke="#bbb" stroke-width="0.7"/></svg>
<svg class="a" style="left:27.3px;top:379.8px;" width="2.4" height="3.6" viewBox="0 0 2.4 3.6"><path d="M0.3 0.2 L2 1.8 L0.3 3.4" fill="none" stroke="#bbb" stroke-width="0.7"/></svg>
<div class="a" style="left:50.8px;top:377px;width:64.3px;height:9.8px;background:#1f4e79"></div>
<div class="a t" style="left:56px;top:379px;font-size:6.6px;line-height:6.6px;color:#eef3f8;font-weight:normal;font-style:normal;font-family:'Liberation Sans',sans-serif;transform:matrix(0.9871,0,0,1,0.579,0.300);-webkit-text-stroke:0;">Document Control</div>
<div class="a" style="left:116.6px;top:377px;width:49.9px;height:9.8px;background:linear-gradient(#f4f6f8,#d9e0e7)"></div>
<div class="a" style="left:116.6px;top:386px;width:49.9px;height:1px;background:#5aa57a"></div>
<div class="a t" style="left:125px;top:379px;font-size:6.6px;line-height:6.6px;color:#217346;font-weight:bold;font-style:normal;font-family:'Liberation Sans',sans-serif;transform:matrix(0.9588,0,0,1,0.510,0.400);">SOP Team</div>
<div class="a" style="left:166.8px;top:377px;width:57.1px;height:9.8px;background:#b6cfee"></div>
<div class="a t" style="left:177px;top:379px;font-size:6.6px;line-height:6.6px;color:#243f66;font-weight:normal;font-style:normal;font-family:'Liberation Sans',sans-serif;transform:matrix(0.9554,0,0,1,0.085,0.400);-webkit-text-stroke:0.1px;">Clarifications</div>
<svg class="a" style="left:241px;top:378px;" width="8" height="8" viewBox="0 0 8 8"><circle cx="4" cy="4" r="3.4" fill="none" stroke="#8a8a8a" stroke-width="0.7"/><path d="M4 2.2 V5.8 M2.2 4 H5.8" stroke="#6a6a6a" stroke-width="0.8"/></svg>
<svg class="a" style="left:597.2px;top:379px;" width="1" height="6.5" viewBox="0 0 1 6.5"><path d="M0.5 0 V6.5" stroke="#b8b8b8" stroke-width="0.8" stroke-dasharray="0.8 0.8"/></svg>
<div class="a" style="left:605.3px;top:378.7px;width:7.7px;height:6.6px;background:#fff;border:1px solid #cfcfcf"></div>
<svg class="a" style="left:607.6px;top:380.4px;" width="2.2" height="3.4" viewBox="0 0 2.2 3.4"><path d="M2.2 0 L0 1.7 L2.2 3.4Z" fill="#555"/></svg>
<div class="a" style="left:612.5px;top:378.7px;width:22.5px;height:6.6px;background:#fff;border:1px solid #cfcfcf"></div>
<div class="a" style="left:638.2px;top:378.7px;width:7.3px;height:6.6px;background:#fff;border:1px solid #cfcfcf"></div>
<svg class="a" style="left:641px;top:380.4px;" width="2.2" height="3.4" viewBox="0 0 2.2 3.4"><path d="M0 0 L2.2 1.7 L0 3.4Z" fill="#555"/></svg>
<div class="a" style="left:0px;top:389px;width:656px;height:11px;background:#217346"></div>
<div class="a t" style="left:3px;top:391px;font-size:6px;line-height:6px;color:#f0f6f2;font-weight:normal;font-style:normal;font-family:'Liberation Sans',sans-serif;transform:matrix(0.7884,0,0,1,0.722,0.200);-webkit-text-stroke:0.05px;">READY</div>
<svg class="a" style="left:29.7px;top:391px;" width="6.4" height="6" viewBox="0 0 6.4 6"><rect x="0.3" y="0.3" width="5.8" height="5.4" fill="none" stroke="#d6e8dc" stroke-width="0.6"/><rect x="0.3" y="0.3" width="5.8" height="1.6" fill="#d6e8dc"/><rect x="1.3" y="3" width="3.8" height="2" fill="#b0d0bc"/></svg>
<div class="a" style="left:508.5px;top:389px;width:17.7px;height:11px;background:#19603a"></div>
<svg class="a" style="left:513.4px;top:390.9px;" width="7.3" height="6.1" viewBox="0 0 7.3 6.1"><rect x="0.3" y="0.3" width="6.7" height="5.5" fill="none" stroke="#d6e8dc" stroke-width="0.6"/><path d="M2.5 0.3 V5.8 M4.8 0.3 V5.8 M0.3 2.1 H7 M0.3 3.9 H7" stroke="#d6e8dc" stroke-width="0.5"/></svg>
<svg class="a" style="left:532px;top:390.9px;" width="8" height="6.1" viewBox="0 0 8 6.1"><rect x="0.3" y="0.3" width="7.4" height="5.5" fill="none" stroke="#c6dccd" stroke-width="0.6"/><rect x="1.8" y="1.3" width="4.4" height="3.5" fill="none" stroke="#c6dccd" stroke-width="0.5"/></svg>
<svg class="a" style="left:550.6px;top:390.9px;" width="7.3" height="6.1" viewBox="0 0 7.3 6.1"><rect x="0.3" y="0.3" width="6.7" height="5.5" fill="none" stroke="#d6e8dc" stroke-width="0.6"/><rect x="2.2" y="0.3" width="2.8" height="3.3" fill="#fff"/></svg>
<div class="a" style="left:565.9px;top:393.6px;width:3px;height:1px;background:#e6f0ea"></div>
<div class="a" style="left:570.7px;top:393.6px;width:48.6px;height:0.8px;background:#9cc8ac"></div>
<div class="a" style="left:594px;top:391.1px;width:2.1px;height:5.9px;background:#fff"></div>
<div class="a" style="left:621.1px;top:393.6px;width:4.3px;height:1px;background:#fff"></div>
<div class="a" style="left:622.7px;top:391.8px;width:1px;height:4.6px;background:#fff"></div>
<div class="a t" style="left:632px;top:391px;font-size:6.2px;line-height:6.2px;color:#f0f6f2;font-weight:normal;font-style:normal;font-family:'Liberation Sans',sans-serif;transform:matrix(0.8726,0,0,1,0.867,0.000);-webkit-text-stroke:0.05px;">100%</div>
</body></html>
